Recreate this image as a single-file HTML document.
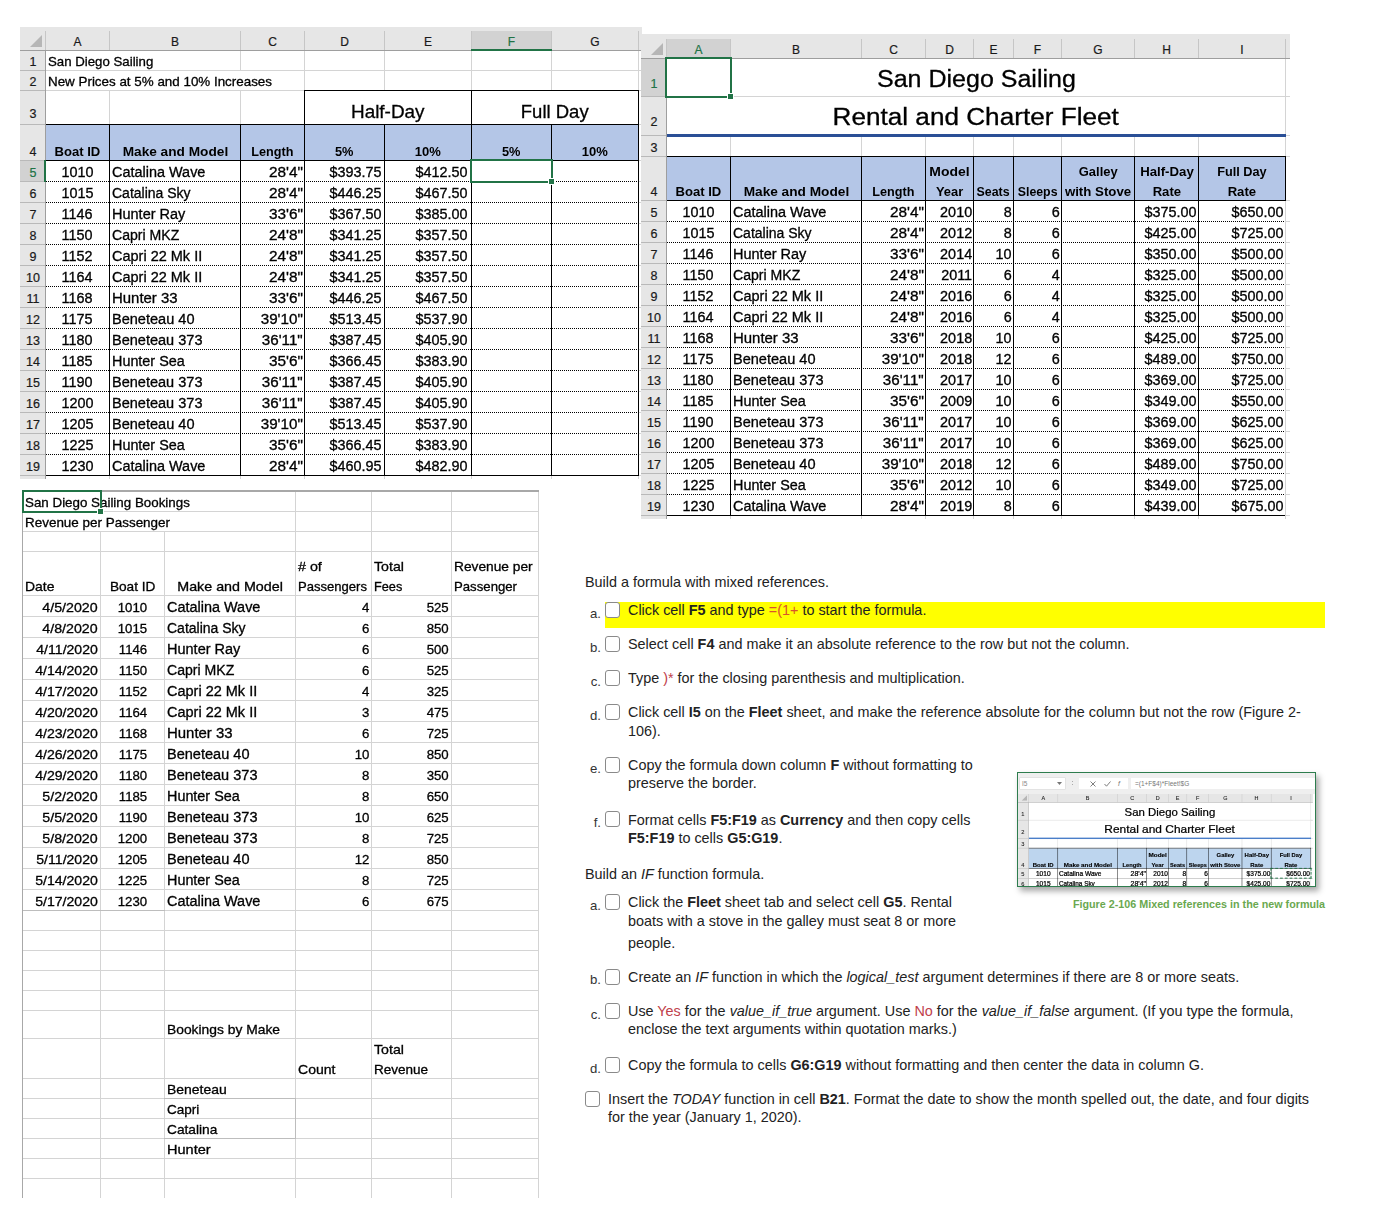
<!DOCTYPE html><html><head><meta charset="utf-8"><style>html,body{margin:0;padding:0;background:#fff;width:1378px;height:1226px;overflow:hidden;position:relative;font-family:"Liberation Sans",sans-serif}div,svg{position:absolute}.t{white-space:nowrap;line-height:0;font-family:"Liberation Sans",sans-serif}</style></head><body>
<div style="left:20px;top:27px;width:622px;height:452px;background:#fff;"></div>
<div style="left:45px;top:70px;width:597px;height:1px;background:#d4d4d4;"></div>
<div style="left:45px;top:90px;width:597px;height:1px;background:#d4d4d4;"></div>
<div style="left:638px;top:124px;width:4px;height:1px;background:#d4d4d4;"></div>
<div style="left:240px;top:50px;width:1px;height:20px;background:#d4d4d4;"></div>
<div style="left:304px;top:50px;width:1px;height:20px;background:#d4d4d4;"></div>
<div style="left:384px;top:50px;width:1px;height:20px;background:#d4d4d4;"></div>
<div style="left:471px;top:50px;width:1px;height:20px;background:#d4d4d4;"></div>
<div style="left:551px;top:50px;width:1px;height:20px;background:#d4d4d4;"></div>
<div style="left:638px;top:50px;width:1px;height:20px;background:#d4d4d4;"></div>
<div style="left:304px;top:70px;width:1px;height:20px;background:#d4d4d4;"></div>
<div style="left:384px;top:70px;width:1px;height:20px;background:#d4d4d4;"></div>
<div style="left:471px;top:70px;width:1px;height:20px;background:#d4d4d4;"></div>
<div style="left:551px;top:70px;width:1px;height:20px;background:#d4d4d4;"></div>
<div style="left:638px;top:70px;width:1px;height:20px;background:#d4d4d4;"></div>
<div style="left:109px;top:90px;width:1px;height:34px;background:#d4d4d4;"></div>
<div style="left:240px;top:90px;width:1px;height:34px;background:#d4d4d4;"></div>
<div style="left:638px;top:160px;width:4px;height:1px;background:#d4d4d4;"></div>
<div style="left:638px;top:181px;width:4px;height:1px;background:#d4d4d4;"></div>
<div style="left:638px;top:202px;width:4px;height:1px;background:#d4d4d4;"></div>
<div style="left:638px;top:223px;width:4px;height:1px;background:#d4d4d4;"></div>
<div style="left:638px;top:244px;width:4px;height:1px;background:#d4d4d4;"></div>
<div style="left:638px;top:265px;width:4px;height:1px;background:#d4d4d4;"></div>
<div style="left:638px;top:286px;width:4px;height:1px;background:#d4d4d4;"></div>
<div style="left:638px;top:307px;width:4px;height:1px;background:#d4d4d4;"></div>
<div style="left:638px;top:328px;width:4px;height:1px;background:#d4d4d4;"></div>
<div style="left:638px;top:349px;width:4px;height:1px;background:#d4d4d4;"></div>
<div style="left:638px;top:370px;width:4px;height:1px;background:#d4d4d4;"></div>
<div style="left:638px;top:391px;width:4px;height:1px;background:#d4d4d4;"></div>
<div style="left:638px;top:412px;width:4px;height:1px;background:#d4d4d4;"></div>
<div style="left:638px;top:433px;width:4px;height:1px;background:#d4d4d4;"></div>
<div style="left:638px;top:454px;width:4px;height:1px;background:#d4d4d4;"></div>
<div style="left:638px;top:475px;width:4px;height:1px;background:#d4d4d4;"></div>
<div style="left:109px;top:475px;width:1px;height:4px;background:#d4d4d4;"></div>
<div style="left:240px;top:475px;width:1px;height:4px;background:#d4d4d4;"></div>
<div style="left:304px;top:475px;width:1px;height:4px;background:#d4d4d4;"></div>
<div style="left:384px;top:475px;width:1px;height:4px;background:#d4d4d4;"></div>
<div style="left:471px;top:475px;width:1px;height:4px;background:#d4d4d4;"></div>
<div style="left:551px;top:475px;width:1px;height:4px;background:#d4d4d4;"></div>
<div style="left:638px;top:475px;width:1px;height:4px;background:#d4d4d4;"></div>
<div style="left:46px;top:125px;width:592px;height:35px;background:#b4c6e7;"></div>
<div style="left:304px;top:90px;width:335px;height:1px;background:#000;"></div>
<div style="left:304px;top:90px;width:1px;height:34px;background:#000;"></div>
<div style="left:471px;top:90px;width:1px;height:34px;background:#000;"></div>
<div style="left:638px;top:90px;width:1px;height:34px;background:#000;"></div>
<div style="left:45px;top:124px;width:594px;height:1px;background:#000;"></div>
<div style="left:45px;top:160px;width:594px;height:1px;background:#000;"></div>
<div style="left:46px;top:181px;width:592px;height:1px;background:repeating-linear-gradient(90deg,#000 0 1px,transparent 1px 2px)"></div>
<div style="left:46px;top:202px;width:592px;height:1px;background:repeating-linear-gradient(90deg,#000 0 1px,transparent 1px 2px)"></div>
<div style="left:46px;top:223px;width:592px;height:1px;background:repeating-linear-gradient(90deg,#000 0 1px,transparent 1px 2px)"></div>
<div style="left:46px;top:244px;width:592px;height:1px;background:repeating-linear-gradient(90deg,#000 0 1px,transparent 1px 2px)"></div>
<div style="left:46px;top:265px;width:592px;height:1px;background:repeating-linear-gradient(90deg,#000 0 1px,transparent 1px 2px)"></div>
<div style="left:46px;top:286px;width:592px;height:1px;background:repeating-linear-gradient(90deg,#000 0 1px,transparent 1px 2px)"></div>
<div style="left:46px;top:307px;width:592px;height:1px;background:repeating-linear-gradient(90deg,#000 0 1px,transparent 1px 2px)"></div>
<div style="left:46px;top:328px;width:592px;height:1px;background:repeating-linear-gradient(90deg,#000 0 1px,transparent 1px 2px)"></div>
<div style="left:46px;top:349px;width:592px;height:1px;background:repeating-linear-gradient(90deg,#000 0 1px,transparent 1px 2px)"></div>
<div style="left:46px;top:370px;width:592px;height:1px;background:repeating-linear-gradient(90deg,#000 0 1px,transparent 1px 2px)"></div>
<div style="left:46px;top:391px;width:592px;height:1px;background:repeating-linear-gradient(90deg,#000 0 1px,transparent 1px 2px)"></div>
<div style="left:46px;top:412px;width:592px;height:1px;background:repeating-linear-gradient(90deg,#000 0 1px,transparent 1px 2px)"></div>
<div style="left:46px;top:433px;width:592px;height:1px;background:repeating-linear-gradient(90deg,#000 0 1px,transparent 1px 2px)"></div>
<div style="left:46px;top:454px;width:592px;height:1px;background:repeating-linear-gradient(90deg,#000 0 1px,transparent 1px 2px)"></div>
<div style="left:45px;top:475px;width:594px;height:1px;background:#000;"></div>
<div style="left:109px;top:124px;width:1px;height:352px;background:#000;"></div>
<div style="left:240px;top:124px;width:1px;height:352px;background:#000;"></div>
<div style="left:304px;top:124px;width:1px;height:352px;background:#000;"></div>
<div style="left:384px;top:124px;width:1px;height:352px;background:#000;"></div>
<div style="left:471px;top:124px;width:1px;height:352px;background:#000;"></div>
<div style="left:551px;top:124px;width:1px;height:352px;background:#000;"></div>
<div style="left:638px;top:124px;width:1px;height:352px;background:#000;"></div>
<div style="left:20px;top:50px;width:25px;height:429px;background:#e6e6e6;"></div>
<div style="left:20px;top:70px;width:25px;height:1px;background:#b9b9b9;"></div>
<div class="t" style="left:20px;top:62px;width:26px;font-size:12.5px;text-align:center;color:#1a1a1a;-webkit-text-stroke:0.2px #1a1a1a">1</div>
<div style="left:20px;top:90px;width:25px;height:1px;background:#b9b9b9;"></div>
<div class="t" style="left:20px;top:82px;width:26px;font-size:12.5px;text-align:center;color:#1a1a1a;-webkit-text-stroke:0.2px #1a1a1a">2</div>
<div style="left:20px;top:124px;width:25px;height:1px;background:#b9b9b9;"></div>
<div class="t" style="left:20px;top:114px;width:26px;font-size:12.5px;text-align:center;color:#1a1a1a;-webkit-text-stroke:0.2px #1a1a1a">3</div>
<div style="left:20px;top:160px;width:25px;height:1px;background:#b9b9b9;"></div>
<div class="t" style="left:20px;top:152px;width:26px;font-size:12.5px;text-align:center;color:#1a1a1a;-webkit-text-stroke:0.2px #1a1a1a">4</div>
<div style="left:20px;top:161px;width:25px;height:20px;background:#d2d2d2;"></div>
<div style="left:20px;top:181px;width:25px;height:1px;background:#b9b9b9;"></div>
<div class="t" style="left:20px;top:173px;width:26px;font-size:12.5px;text-align:center;color:#217346;-webkit-text-stroke:0.2px #217346">5</div>
<div style="left:20px;top:202px;width:25px;height:1px;background:#b9b9b9;"></div>
<div class="t" style="left:20px;top:194px;width:26px;font-size:12.5px;text-align:center;color:#1a1a1a;-webkit-text-stroke:0.2px #1a1a1a">6</div>
<div style="left:20px;top:223px;width:25px;height:1px;background:#b9b9b9;"></div>
<div class="t" style="left:20px;top:215px;width:26px;font-size:12.5px;text-align:center;color:#1a1a1a;-webkit-text-stroke:0.2px #1a1a1a">7</div>
<div style="left:20px;top:244px;width:25px;height:1px;background:#b9b9b9;"></div>
<div class="t" style="left:20px;top:236px;width:26px;font-size:12.5px;text-align:center;color:#1a1a1a;-webkit-text-stroke:0.2px #1a1a1a">8</div>
<div style="left:20px;top:265px;width:25px;height:1px;background:#b9b9b9;"></div>
<div class="t" style="left:20px;top:257px;width:26px;font-size:12.5px;text-align:center;color:#1a1a1a;-webkit-text-stroke:0.2px #1a1a1a">9</div>
<div style="left:20px;top:286px;width:25px;height:1px;background:#b9b9b9;"></div>
<div class="t" style="left:20px;top:278px;width:26px;font-size:12.5px;text-align:center;color:#1a1a1a;-webkit-text-stroke:0.2px #1a1a1a">10</div>
<div style="left:20px;top:307px;width:25px;height:1px;background:#b9b9b9;"></div>
<div class="t" style="left:20px;top:299px;width:26px;font-size:12.5px;text-align:center;color:#1a1a1a;-webkit-text-stroke:0.2px #1a1a1a">11</div>
<div style="left:20px;top:328px;width:25px;height:1px;background:#b9b9b9;"></div>
<div class="t" style="left:20px;top:320px;width:26px;font-size:12.5px;text-align:center;color:#1a1a1a;-webkit-text-stroke:0.2px #1a1a1a">12</div>
<div style="left:20px;top:349px;width:25px;height:1px;background:#b9b9b9;"></div>
<div class="t" style="left:20px;top:341px;width:26px;font-size:12.5px;text-align:center;color:#1a1a1a;-webkit-text-stroke:0.2px #1a1a1a">13</div>
<div style="left:20px;top:370px;width:25px;height:1px;background:#b9b9b9;"></div>
<div class="t" style="left:20px;top:362px;width:26px;font-size:12.5px;text-align:center;color:#1a1a1a;-webkit-text-stroke:0.2px #1a1a1a">14</div>
<div style="left:20px;top:391px;width:25px;height:1px;background:#b9b9b9;"></div>
<div class="t" style="left:20px;top:383px;width:26px;font-size:12.5px;text-align:center;color:#1a1a1a;-webkit-text-stroke:0.2px #1a1a1a">15</div>
<div style="left:20px;top:412px;width:25px;height:1px;background:#b9b9b9;"></div>
<div class="t" style="left:20px;top:404px;width:26px;font-size:12.5px;text-align:center;color:#1a1a1a;-webkit-text-stroke:0.2px #1a1a1a">16</div>
<div style="left:20px;top:433px;width:25px;height:1px;background:#b9b9b9;"></div>
<div class="t" style="left:20px;top:425px;width:26px;font-size:12.5px;text-align:center;color:#1a1a1a;-webkit-text-stroke:0.2px #1a1a1a">17</div>
<div style="left:20px;top:454px;width:25px;height:1px;background:#b9b9b9;"></div>
<div class="t" style="left:20px;top:446px;width:26px;font-size:12.5px;text-align:center;color:#1a1a1a;-webkit-text-stroke:0.2px #1a1a1a">18</div>
<div style="left:20px;top:475px;width:25px;height:1px;background:#b9b9b9;"></div>
<div class="t" style="left:20px;top:467px;width:26px;font-size:12.5px;text-align:center;color:#1a1a1a;-webkit-text-stroke:0.2px #1a1a1a">19</div>
<div style="left:45px;top:50px;width:1px;height:429px;background:#9e9e9e;"></div>
<div style="left:44px;top:160px;width:2px;height:22px;background:#217346;"></div>
<div style="left:20px;top:27px;width:622px;height:23px;background:#e6e6e6;"></div>
<svg style="left:30px;top:35px" width="12" height="12"><polygon points="12,0 12,12 0,12" fill="#b6b6b6"/></svg>
<div style="left:472px;top:31px;width:79px;height:19px;background:#d2d2d2;"></div>
<div style="left:45px;top:31px;width:1px;height:19px;background:#c6c6c6;"></div>
<div style="left:109px;top:31px;width:1px;height:19px;background:#c6c6c6;"></div>
<div style="left:240px;top:31px;width:1px;height:19px;background:#c6c6c6;"></div>
<div style="left:304px;top:31px;width:1px;height:19px;background:#c6c6c6;"></div>
<div style="left:384px;top:31px;width:1px;height:19px;background:#c6c6c6;"></div>
<div style="left:471px;top:31px;width:1px;height:19px;background:#c6c6c6;"></div>
<div style="left:551px;top:31px;width:1px;height:19px;background:#c6c6c6;"></div>
<div style="left:638px;top:31px;width:1px;height:19px;background:#c6c6c6;"></div>
<div style="left:20px;top:50px;width:622px;height:1px;background:#9e9e9e;"></div>
<div class="t" style="left:45px;top:42px;width:65px;font-size:12px;text-align:center;color:#1a1a1a;-webkit-text-stroke:0.2px #1a1a1a">A</div>
<div class="t" style="left:109px;top:42px;width:132px;font-size:12px;text-align:center;color:#1a1a1a;-webkit-text-stroke:0.2px #1a1a1a">B</div>
<div class="t" style="left:240px;top:42px;width:65px;font-size:12px;text-align:center;color:#1a1a1a;-webkit-text-stroke:0.2px #1a1a1a">C</div>
<div class="t" style="left:304px;top:42px;width:81px;font-size:12px;text-align:center;color:#1a1a1a;-webkit-text-stroke:0.2px #1a1a1a">D</div>
<div class="t" style="left:384px;top:42px;width:88px;font-size:12px;text-align:center;color:#1a1a1a;-webkit-text-stroke:0.2px #1a1a1a">E</div>
<div class="t" style="left:471px;top:42px;width:81px;font-size:12px;text-align:center;color:#217346;-webkit-text-stroke:0.2px #217346">F</div>
<div style="left:471px;top:49px;width:81px;height:2px;background:#217346;"></div>
<div class="t" style="left:551px;top:42px;width:88px;font-size:12px;text-align:center;color:#1a1a1a;-webkit-text-stroke:0.2px #1a1a1a">G</div>
<div class="t" style="left:48px;top:62px;width:352px;font-size:13px;text-align:left;color:#000;-webkit-text-stroke:0.3px #000;"><span style="display:inline-block;transform:scaleX(1.0185);transform-origin:0 0">San Diego Sailing</span></div>
<div class="t" style="left:48px;top:82px;width:352px;font-size:13px;text-align:left;color:#000;-webkit-text-stroke:0.3px #000;"><span style="display:inline-block;transform:scaleX(1.0299);transform-origin:0 0">New Prices at 5% and 10% Increases</span></div>
<div class="t" style="left:304px;top:112px;width:168px;font-size:18.4px;text-align:center;color:#000;-webkit-text-stroke:0.3px #000;"><span style="display:inline-block;transform:scaleX(1.0288);transform-origin:50% 0">Half-Day</span></div>
<div class="t" style="left:471px;top:112px;width:168px;font-size:18.4px;text-align:center;color:#000;-webkit-text-stroke:0.3px #000;"><span style="display:inline-block;transform:scaleX(1.0058);transform-origin:50% 0">Full Day</span></div>
<div class="t" style="left:45px;top:152px;width:65px;font-size:12.8px;text-align:center;color:#000;font-weight:bold;"><span style="display:inline-block;transform:scaleX(1.0210);transform-origin:50% 0">Boat ID</span></div>
<div class="t" style="left:109px;top:152px;width:132px;font-size:12.8px;text-align:center;color:#000;font-weight:bold;"><span style="display:inline-block;transform:scaleX(1.0680);transform-origin:50% 0">Make and Model</span></div>
<div class="t" style="left:240px;top:152px;width:65px;font-size:12.8px;text-align:center;color:#000;font-weight:bold;"><span style="display:inline-block;transform:scaleX(0.9878);transform-origin:50% 0">Length</span></div>
<div class="t" style="left:304px;top:152px;width:81px;font-size:12.8px;text-align:center;color:#000;font-weight:bold;"><span style="display:inline-block;transform:scaleX(0.9980);transform-origin:50% 0">5%</span></div>
<div class="t" style="left:384px;top:152px;width:88px;font-size:12.8px;text-align:center;color:#000;font-weight:bold;"><span style="display:inline-block;transform:scaleX(1.0163);transform-origin:50% 0">10%</span></div>
<div class="t" style="left:471px;top:152px;width:81px;font-size:12.8px;text-align:center;color:#000;font-weight:bold;"><span style="display:inline-block;transform:scaleX(0.9980);transform-origin:50% 0">5%</span></div>
<div class="t" style="left:551px;top:152px;width:88px;font-size:12.8px;text-align:center;color:#000;font-weight:bold;"><span style="display:inline-block;transform:scaleX(1.0163);transform-origin:50% 0">10%</span></div>
<div class="t" style="left:45px;top:172px;width:65px;font-size:14px;text-align:center;color:#000;-webkit-text-stroke:0.3px #000;"><span style="display:inline-block;transform:scaleX(1.0285);transform-origin:50% 0">1010</span></div>
<div class="t" style="left:112px;top:172px;width:128px;font-size:14px;text-align:left;color:#000;-webkit-text-stroke:0.3px #000;"><span style="display:inline-block;transform:scaleX(1.0316);transform-origin:0 0">Catalina Wave</span></div>
<div class="t" style="left:240px;top:172px;width:63px;font-size:14px;text-align:right;color:#000;-webkit-text-stroke:0.3px #000;"><span style="display:inline-block;transform:scaleX(1.0978);transform-origin:100% 0">28&#x27;4&quot;</span></div>
<div class="t" style="left:304px;top:172px;width:78px;font-size:14px;text-align:right;color:#000;-webkit-text-stroke:0.3px #000;"><span style="display:inline-block;transform:scaleX(1.0283);transform-origin:100% 0">$393.75</span></div>
<div class="t" style="left:384px;top:172px;width:84px;font-size:14px;text-align:right;color:#000;-webkit-text-stroke:0.3px #000;"><span style="display:inline-block;transform:scaleX(1.0283);transform-origin:100% 0">$412.50</span></div>
<div class="t" style="left:45px;top:193px;width:65px;font-size:14px;text-align:center;color:#000;-webkit-text-stroke:0.3px #000;"><span style="display:inline-block;transform:scaleX(1.0285);transform-origin:50% 0">1015</span></div>
<div class="t" style="left:112px;top:193px;width:128px;font-size:14px;text-align:left;color:#000;-webkit-text-stroke:0.3px #000;"><span style="display:inline-block;transform:scaleX(1.0002);transform-origin:0 0">Catalina Sky</span></div>
<div class="t" style="left:240px;top:193px;width:63px;font-size:14px;text-align:right;color:#000;-webkit-text-stroke:0.3px #000;"><span style="display:inline-block;transform:scaleX(1.0978);transform-origin:100% 0">28&#x27;4&quot;</span></div>
<div class="t" style="left:304px;top:193px;width:78px;font-size:14px;text-align:right;color:#000;-webkit-text-stroke:0.3px #000;"><span style="display:inline-block;transform:scaleX(1.0283);transform-origin:100% 0">$446.25</span></div>
<div class="t" style="left:384px;top:193px;width:84px;font-size:14px;text-align:right;color:#000;-webkit-text-stroke:0.3px #000;"><span style="display:inline-block;transform:scaleX(1.0283);transform-origin:100% 0">$467.50</span></div>
<div class="t" style="left:45px;top:214px;width:65px;font-size:14px;text-align:center;color:#000;-webkit-text-stroke:0.3px #000;"><span style="display:inline-block;transform:scaleX(1.0285);transform-origin:50% 0">1146</span></div>
<div class="t" style="left:112px;top:214px;width:128px;font-size:14px;text-align:left;color:#000;-webkit-text-stroke:0.3px #000;"><span style="display:inline-block;transform:scaleX(1.0359);transform-origin:0 0">Hunter Ray</span></div>
<div class="t" style="left:240px;top:214px;width:63px;font-size:14px;text-align:right;color:#000;-webkit-text-stroke:0.3px #000;"><span style="display:inline-block;transform:scaleX(1.0978);transform-origin:100% 0">33&#x27;6&quot;</span></div>
<div class="t" style="left:304px;top:214px;width:78px;font-size:14px;text-align:right;color:#000;-webkit-text-stroke:0.3px #000;"><span style="display:inline-block;transform:scaleX(1.0283);transform-origin:100% 0">$367.50</span></div>
<div class="t" style="left:384px;top:214px;width:84px;font-size:14px;text-align:right;color:#000;-webkit-text-stroke:0.3px #000;"><span style="display:inline-block;transform:scaleX(1.0283);transform-origin:100% 0">$385.00</span></div>
<div class="t" style="left:45px;top:235px;width:65px;font-size:14px;text-align:center;color:#000;-webkit-text-stroke:0.3px #000;"><span style="display:inline-block;transform:scaleX(1.0285);transform-origin:50% 0">1150</span></div>
<div class="t" style="left:112px;top:235px;width:128px;font-size:14px;text-align:left;color:#000;-webkit-text-stroke:0.3px #000;"><span style="display:inline-block;transform:scaleX(1.0071);transform-origin:0 0">Capri MKZ</span></div>
<div class="t" style="left:240px;top:235px;width:63px;font-size:14px;text-align:right;color:#000;-webkit-text-stroke:0.3px #000;"><span style="display:inline-block;transform:scaleX(1.0978);transform-origin:100% 0">24&#x27;8&quot;</span></div>
<div class="t" style="left:304px;top:235px;width:78px;font-size:14px;text-align:right;color:#000;-webkit-text-stroke:0.3px #000;"><span style="display:inline-block;transform:scaleX(1.0283);transform-origin:100% 0">$341.25</span></div>
<div class="t" style="left:384px;top:235px;width:84px;font-size:14px;text-align:right;color:#000;-webkit-text-stroke:0.3px #000;"><span style="display:inline-block;transform:scaleX(1.0283);transform-origin:100% 0">$357.50</span></div>
<div class="t" style="left:45px;top:256px;width:65px;font-size:14px;text-align:center;color:#000;-webkit-text-stroke:0.3px #000;"><span style="display:inline-block;transform:scaleX(1.0285);transform-origin:50% 0">1152</span></div>
<div class="t" style="left:112px;top:256px;width:128px;font-size:14px;text-align:left;color:#000;-webkit-text-stroke:0.3px #000;"><span style="display:inline-block;transform:scaleX(1.0351);transform-origin:0 0">Capri 22 Mk II</span></div>
<div class="t" style="left:240px;top:256px;width:63px;font-size:14px;text-align:right;color:#000;-webkit-text-stroke:0.3px #000;"><span style="display:inline-block;transform:scaleX(1.0978);transform-origin:100% 0">24&#x27;8&quot;</span></div>
<div class="t" style="left:304px;top:256px;width:78px;font-size:14px;text-align:right;color:#000;-webkit-text-stroke:0.3px #000;"><span style="display:inline-block;transform:scaleX(1.0283);transform-origin:100% 0">$341.25</span></div>
<div class="t" style="left:384px;top:256px;width:84px;font-size:14px;text-align:right;color:#000;-webkit-text-stroke:0.3px #000;"><span style="display:inline-block;transform:scaleX(1.0283);transform-origin:100% 0">$357.50</span></div>
<div class="t" style="left:45px;top:277px;width:65px;font-size:14px;text-align:center;color:#000;-webkit-text-stroke:0.3px #000;"><span style="display:inline-block;transform:scaleX(1.0285);transform-origin:50% 0">1164</span></div>
<div class="t" style="left:112px;top:277px;width:128px;font-size:14px;text-align:left;color:#000;-webkit-text-stroke:0.3px #000;"><span style="display:inline-block;transform:scaleX(1.0351);transform-origin:0 0">Capri 22 Mk II</span></div>
<div class="t" style="left:240px;top:277px;width:63px;font-size:14px;text-align:right;color:#000;-webkit-text-stroke:0.3px #000;"><span style="display:inline-block;transform:scaleX(1.0978);transform-origin:100% 0">24&#x27;8&quot;</span></div>
<div class="t" style="left:304px;top:277px;width:78px;font-size:14px;text-align:right;color:#000;-webkit-text-stroke:0.3px #000;"><span style="display:inline-block;transform:scaleX(1.0283);transform-origin:100% 0">$341.25</span></div>
<div class="t" style="left:384px;top:277px;width:84px;font-size:14px;text-align:right;color:#000;-webkit-text-stroke:0.3px #000;"><span style="display:inline-block;transform:scaleX(1.0283);transform-origin:100% 0">$357.50</span></div>
<div class="t" style="left:45px;top:298px;width:65px;font-size:14px;text-align:center;color:#000;-webkit-text-stroke:0.3px #000;"><span style="display:inline-block;transform:scaleX(1.0285);transform-origin:50% 0">1168</span></div>
<div class="t" style="left:112px;top:298px;width:128px;font-size:14px;text-align:left;color:#000;-webkit-text-stroke:0.3px #000;"><span style="display:inline-block;transform:scaleX(1.0673);transform-origin:0 0">Hunter 33</span></div>
<div class="t" style="left:240px;top:298px;width:63px;font-size:14px;text-align:right;color:#000;-webkit-text-stroke:0.3px #000;"><span style="display:inline-block;transform:scaleX(1.0978);transform-origin:100% 0">33&#x27;6&quot;</span></div>
<div class="t" style="left:304px;top:298px;width:78px;font-size:14px;text-align:right;color:#000;-webkit-text-stroke:0.3px #000;"><span style="display:inline-block;transform:scaleX(1.0283);transform-origin:100% 0">$446.25</span></div>
<div class="t" style="left:384px;top:298px;width:84px;font-size:14px;text-align:right;color:#000;-webkit-text-stroke:0.3px #000;"><span style="display:inline-block;transform:scaleX(1.0283);transform-origin:100% 0">$467.50</span></div>
<div class="t" style="left:45px;top:319px;width:65px;font-size:14px;text-align:center;color:#000;-webkit-text-stroke:0.3px #000;"><span style="display:inline-block;transform:scaleX(1.0285);transform-origin:50% 0">1175</span></div>
<div class="t" style="left:112px;top:319px;width:128px;font-size:14px;text-align:left;color:#000;-webkit-text-stroke:0.3px #000;"><span style="display:inline-block;transform:scaleX(1.0386);transform-origin:0 0">Beneteau 40</span></div>
<div class="t" style="left:240px;top:319px;width:63px;font-size:14px;text-align:right;color:#000;-webkit-text-stroke:0.3px #000;"><span style="display:inline-block;transform:scaleX(1.0839);transform-origin:100% 0">39&#x27;10&quot;</span></div>
<div class="t" style="left:304px;top:319px;width:78px;font-size:14px;text-align:right;color:#000;-webkit-text-stroke:0.3px #000;"><span style="display:inline-block;transform:scaleX(1.0283);transform-origin:100% 0">$513.45</span></div>
<div class="t" style="left:384px;top:319px;width:84px;font-size:14px;text-align:right;color:#000;-webkit-text-stroke:0.3px #000;"><span style="display:inline-block;transform:scaleX(1.0283);transform-origin:100% 0">$537.90</span></div>
<div class="t" style="left:45px;top:340px;width:65px;font-size:14px;text-align:center;color:#000;-webkit-text-stroke:0.3px #000;"><span style="display:inline-block;transform:scaleX(1.0285);transform-origin:50% 0">1180</span></div>
<div class="t" style="left:112px;top:340px;width:128px;font-size:14px;text-align:left;color:#000;-webkit-text-stroke:0.3px #000;"><span style="display:inline-block;transform:scaleX(1.0377);transform-origin:0 0">Beneteau 373</span></div>
<div class="t" style="left:240px;top:340px;width:63px;font-size:14px;text-align:right;color:#000;-webkit-text-stroke:0.3px #000;"><span style="display:inline-block;transform:scaleX(1.0839);transform-origin:100% 0">36&#x27;11&quot;</span></div>
<div class="t" style="left:304px;top:340px;width:78px;font-size:14px;text-align:right;color:#000;-webkit-text-stroke:0.3px #000;"><span style="display:inline-block;transform:scaleX(1.0283);transform-origin:100% 0">$387.45</span></div>
<div class="t" style="left:384px;top:340px;width:84px;font-size:14px;text-align:right;color:#000;-webkit-text-stroke:0.3px #000;"><span style="display:inline-block;transform:scaleX(1.0283);transform-origin:100% 0">$405.90</span></div>
<div class="t" style="left:45px;top:361px;width:65px;font-size:14px;text-align:center;color:#000;-webkit-text-stroke:0.3px #000;"><span style="display:inline-block;transform:scaleX(1.0285);transform-origin:50% 0">1185</span></div>
<div class="t" style="left:112px;top:361px;width:128px;font-size:14px;text-align:left;color:#000;-webkit-text-stroke:0.3px #000;"><span style="display:inline-block;transform:scaleX(1.0269);transform-origin:0 0">Hunter Sea</span></div>
<div class="t" style="left:240px;top:361px;width:63px;font-size:14px;text-align:right;color:#000;-webkit-text-stroke:0.3px #000;"><span style="display:inline-block;transform:scaleX(1.0978);transform-origin:100% 0">35&#x27;6&quot;</span></div>
<div class="t" style="left:304px;top:361px;width:78px;font-size:14px;text-align:right;color:#000;-webkit-text-stroke:0.3px #000;"><span style="display:inline-block;transform:scaleX(1.0283);transform-origin:100% 0">$366.45</span></div>
<div class="t" style="left:384px;top:361px;width:84px;font-size:14px;text-align:right;color:#000;-webkit-text-stroke:0.3px #000;"><span style="display:inline-block;transform:scaleX(1.0283);transform-origin:100% 0">$383.90</span></div>
<div class="t" style="left:45px;top:382px;width:65px;font-size:14px;text-align:center;color:#000;-webkit-text-stroke:0.3px #000;"><span style="display:inline-block;transform:scaleX(1.0285);transform-origin:50% 0">1190</span></div>
<div class="t" style="left:112px;top:382px;width:128px;font-size:14px;text-align:left;color:#000;-webkit-text-stroke:0.3px #000;"><span style="display:inline-block;transform:scaleX(1.0377);transform-origin:0 0">Beneteau 373</span></div>
<div class="t" style="left:240px;top:382px;width:63px;font-size:14px;text-align:right;color:#000;-webkit-text-stroke:0.3px #000;"><span style="display:inline-block;transform:scaleX(1.0839);transform-origin:100% 0">36&#x27;11&quot;</span></div>
<div class="t" style="left:304px;top:382px;width:78px;font-size:14px;text-align:right;color:#000;-webkit-text-stroke:0.3px #000;"><span style="display:inline-block;transform:scaleX(1.0283);transform-origin:100% 0">$387.45</span></div>
<div class="t" style="left:384px;top:382px;width:84px;font-size:14px;text-align:right;color:#000;-webkit-text-stroke:0.3px #000;"><span style="display:inline-block;transform:scaleX(1.0283);transform-origin:100% 0">$405.90</span></div>
<div class="t" style="left:45px;top:403px;width:65px;font-size:14px;text-align:center;color:#000;-webkit-text-stroke:0.3px #000;"><span style="display:inline-block;transform:scaleX(1.0285);transform-origin:50% 0">1200</span></div>
<div class="t" style="left:112px;top:403px;width:128px;font-size:14px;text-align:left;color:#000;-webkit-text-stroke:0.3px #000;"><span style="display:inline-block;transform:scaleX(1.0377);transform-origin:0 0">Beneteau 373</span></div>
<div class="t" style="left:240px;top:403px;width:63px;font-size:14px;text-align:right;color:#000;-webkit-text-stroke:0.3px #000;"><span style="display:inline-block;transform:scaleX(1.0839);transform-origin:100% 0">36&#x27;11&quot;</span></div>
<div class="t" style="left:304px;top:403px;width:78px;font-size:14px;text-align:right;color:#000;-webkit-text-stroke:0.3px #000;"><span style="display:inline-block;transform:scaleX(1.0283);transform-origin:100% 0">$387.45</span></div>
<div class="t" style="left:384px;top:403px;width:84px;font-size:14px;text-align:right;color:#000;-webkit-text-stroke:0.3px #000;"><span style="display:inline-block;transform:scaleX(1.0283);transform-origin:100% 0">$405.90</span></div>
<div class="t" style="left:45px;top:424px;width:65px;font-size:14px;text-align:center;color:#000;-webkit-text-stroke:0.3px #000;"><span style="display:inline-block;transform:scaleX(1.0285);transform-origin:50% 0">1205</span></div>
<div class="t" style="left:112px;top:424px;width:128px;font-size:14px;text-align:left;color:#000;-webkit-text-stroke:0.3px #000;"><span style="display:inline-block;transform:scaleX(1.0386);transform-origin:0 0">Beneteau 40</span></div>
<div class="t" style="left:240px;top:424px;width:63px;font-size:14px;text-align:right;color:#000;-webkit-text-stroke:0.3px #000;"><span style="display:inline-block;transform:scaleX(1.0839);transform-origin:100% 0">39&#x27;10&quot;</span></div>
<div class="t" style="left:304px;top:424px;width:78px;font-size:14px;text-align:right;color:#000;-webkit-text-stroke:0.3px #000;"><span style="display:inline-block;transform:scaleX(1.0283);transform-origin:100% 0">$513.45</span></div>
<div class="t" style="left:384px;top:424px;width:84px;font-size:14px;text-align:right;color:#000;-webkit-text-stroke:0.3px #000;"><span style="display:inline-block;transform:scaleX(1.0283);transform-origin:100% 0">$537.90</span></div>
<div class="t" style="left:45px;top:445px;width:65px;font-size:14px;text-align:center;color:#000;-webkit-text-stroke:0.3px #000;"><span style="display:inline-block;transform:scaleX(1.0285);transform-origin:50% 0">1225</span></div>
<div class="t" style="left:112px;top:445px;width:128px;font-size:14px;text-align:left;color:#000;-webkit-text-stroke:0.3px #000;"><span style="display:inline-block;transform:scaleX(1.0269);transform-origin:0 0">Hunter Sea</span></div>
<div class="t" style="left:240px;top:445px;width:63px;font-size:14px;text-align:right;color:#000;-webkit-text-stroke:0.3px #000;"><span style="display:inline-block;transform:scaleX(1.0978);transform-origin:100% 0">35&#x27;6&quot;</span></div>
<div class="t" style="left:304px;top:445px;width:78px;font-size:14px;text-align:right;color:#000;-webkit-text-stroke:0.3px #000;"><span style="display:inline-block;transform:scaleX(1.0283);transform-origin:100% 0">$366.45</span></div>
<div class="t" style="left:384px;top:445px;width:84px;font-size:14px;text-align:right;color:#000;-webkit-text-stroke:0.3px #000;"><span style="display:inline-block;transform:scaleX(1.0283);transform-origin:100% 0">$383.90</span></div>
<div class="t" style="left:45px;top:466px;width:65px;font-size:14px;text-align:center;color:#000;-webkit-text-stroke:0.3px #000;"><span style="display:inline-block;transform:scaleX(1.0285);transform-origin:50% 0">1230</span></div>
<div class="t" style="left:112px;top:466px;width:128px;font-size:14px;text-align:left;color:#000;-webkit-text-stroke:0.3px #000;"><span style="display:inline-block;transform:scaleX(1.0316);transform-origin:0 0">Catalina Wave</span></div>
<div class="t" style="left:240px;top:466px;width:63px;font-size:14px;text-align:right;color:#000;-webkit-text-stroke:0.3px #000;"><span style="display:inline-block;transform:scaleX(1.0978);transform-origin:100% 0">28&#x27;4&quot;</span></div>
<div class="t" style="left:304px;top:466px;width:78px;font-size:14px;text-align:right;color:#000;-webkit-text-stroke:0.3px #000;"><span style="display:inline-block;transform:scaleX(1.0283);transform-origin:100% 0">$460.95</span></div>
<div class="t" style="left:384px;top:466px;width:84px;font-size:14px;text-align:right;color:#000;-webkit-text-stroke:0.3px #000;"><span style="display:inline-block;transform:scaleX(1.0283);transform-origin:100% 0">$482.90</span></div>
<div style="left:470px;top:159px;width:83px;height:24px;box-sizing:border-box;border:2px solid #217346;"></div>
<div style="left:549px;top:179px;width:5px;height:5px;background:#217346;outline:1px solid #fff"></div>
<div style="left:641px;top:34px;width:649px;height:485px;background:#fff;"></div>
<div style="left:666px;top:96px;width:624px;height:1px;background:#d4d4d4;"></div>
<div style="left:1285px;top:58px;width:1px;height:98px;background:#d4d4d4;"></div>
<div style="left:666px;top:156px;width:624px;height:1px;background:#d4d4d4;"></div>
<div style="left:730px;top:137px;width:1px;height:19px;background:#d4d4d4;"></div>
<div style="left:861px;top:137px;width:1px;height:19px;background:#d4d4d4;"></div>
<div style="left:925px;top:137px;width:1px;height:19px;background:#d4d4d4;"></div>
<div style="left:973px;top:137px;width:1px;height:19px;background:#d4d4d4;"></div>
<div style="left:1013px;top:137px;width:1px;height:19px;background:#d4d4d4;"></div>
<div style="left:1061px;top:137px;width:1px;height:19px;background:#d4d4d4;"></div>
<div style="left:1134px;top:137px;width:1px;height:19px;background:#d4d4d4;"></div>
<div style="left:1198px;top:137px;width:1px;height:19px;background:#d4d4d4;"></div>
<div style="left:730px;top:516px;width:1px;height:3px;background:#d4d4d4;"></div>
<div style="left:861px;top:516px;width:1px;height:3px;background:#d4d4d4;"></div>
<div style="left:925px;top:516px;width:1px;height:3px;background:#d4d4d4;"></div>
<div style="left:973px;top:516px;width:1px;height:3px;background:#d4d4d4;"></div>
<div style="left:1013px;top:516px;width:1px;height:3px;background:#d4d4d4;"></div>
<div style="left:1061px;top:516px;width:1px;height:3px;background:#d4d4d4;"></div>
<div style="left:1134px;top:516px;width:1px;height:3px;background:#d4d4d4;"></div>
<div style="left:1198px;top:516px;width:1px;height:3px;background:#d4d4d4;"></div>
<div style="left:1285px;top:516px;width:1px;height:3px;background:#d4d4d4;"></div>
<div style="left:667px;top:157px;width:618px;height:43px;background:#b4c6e7;"></div>
<div style="left:667px;top:134px;width:619px;height:3px;background:#2a4f96;"></div>
<div style="left:666px;top:156px;width:620px;height:1px;background:#000;"></div>
<div style="left:666px;top:200px;width:620px;height:1px;background:#000;"></div>
<div style="left:667px;top:221px;width:618px;height:1px;background:repeating-linear-gradient(90deg,#000 0 1px,transparent 1px 2px)"></div>
<div style="left:1285px;top:221px;width:5px;height:1px;background:#d4d4d4;"></div>
<div style="left:667px;top:242px;width:618px;height:1px;background:repeating-linear-gradient(90deg,#000 0 1px,transparent 1px 2px)"></div>
<div style="left:1285px;top:242px;width:5px;height:1px;background:#d4d4d4;"></div>
<div style="left:667px;top:263px;width:618px;height:1px;background:repeating-linear-gradient(90deg,#000 0 1px,transparent 1px 2px)"></div>
<div style="left:1285px;top:263px;width:5px;height:1px;background:#d4d4d4;"></div>
<div style="left:667px;top:284px;width:618px;height:1px;background:repeating-linear-gradient(90deg,#000 0 1px,transparent 1px 2px)"></div>
<div style="left:1285px;top:284px;width:5px;height:1px;background:#d4d4d4;"></div>
<div style="left:667px;top:305px;width:618px;height:1px;background:repeating-linear-gradient(90deg,#000 0 1px,transparent 1px 2px)"></div>
<div style="left:1285px;top:305px;width:5px;height:1px;background:#d4d4d4;"></div>
<div style="left:667px;top:326px;width:618px;height:1px;background:repeating-linear-gradient(90deg,#000 0 1px,transparent 1px 2px)"></div>
<div style="left:1285px;top:326px;width:5px;height:1px;background:#d4d4d4;"></div>
<div style="left:667px;top:347px;width:618px;height:1px;background:repeating-linear-gradient(90deg,#000 0 1px,transparent 1px 2px)"></div>
<div style="left:1285px;top:347px;width:5px;height:1px;background:#d4d4d4;"></div>
<div style="left:667px;top:368px;width:618px;height:1px;background:repeating-linear-gradient(90deg,#000 0 1px,transparent 1px 2px)"></div>
<div style="left:1285px;top:368px;width:5px;height:1px;background:#d4d4d4;"></div>
<div style="left:667px;top:389px;width:618px;height:1px;background:repeating-linear-gradient(90deg,#000 0 1px,transparent 1px 2px)"></div>
<div style="left:1285px;top:389px;width:5px;height:1px;background:#d4d4d4;"></div>
<div style="left:667px;top:410px;width:618px;height:1px;background:repeating-linear-gradient(90deg,#000 0 1px,transparent 1px 2px)"></div>
<div style="left:1285px;top:410px;width:5px;height:1px;background:#d4d4d4;"></div>
<div style="left:667px;top:431px;width:618px;height:1px;background:repeating-linear-gradient(90deg,#000 0 1px,transparent 1px 2px)"></div>
<div style="left:1285px;top:431px;width:5px;height:1px;background:#d4d4d4;"></div>
<div style="left:667px;top:452px;width:618px;height:1px;background:repeating-linear-gradient(90deg,#000 0 1px,transparent 1px 2px)"></div>
<div style="left:1285px;top:452px;width:5px;height:1px;background:#d4d4d4;"></div>
<div style="left:667px;top:473px;width:618px;height:1px;background:repeating-linear-gradient(90deg,#000 0 1px,transparent 1px 2px)"></div>
<div style="left:1285px;top:473px;width:5px;height:1px;background:#d4d4d4;"></div>
<div style="left:667px;top:494px;width:618px;height:1px;background:repeating-linear-gradient(90deg,#000 0 1px,transparent 1px 2px)"></div>
<div style="left:1285px;top:494px;width:5px;height:1px;background:#d4d4d4;"></div>
<div style="left:666px;top:515px;width:619px;height:1px;background:#000;"></div>
<div style="left:730px;top:156px;width:1px;height:360px;background:#000;"></div>
<div style="left:861px;top:156px;width:1px;height:360px;background:#000;"></div>
<div style="left:925px;top:156px;width:1px;height:360px;background:#000;"></div>
<div style="left:973px;top:156px;width:1px;height:360px;background:#000;"></div>
<div style="left:1013px;top:156px;width:1px;height:360px;background:#000;"></div>
<div style="left:1061px;top:156px;width:1px;height:360px;background:#000;"></div>
<div style="left:1134px;top:156px;width:1px;height:360px;background:#000;"></div>
<div style="left:1198px;top:156px;width:1px;height:360px;background:#000;"></div>
<div style="left:1285px;top:156px;width:1px;height:45px;background:#000;"></div>
<div style="left:1285px;top:201px;width:1px;height:318px;background:#d4d4d4;"></div>
<div style="left:1286px;top:96px;width:4px;height:1px;background:#d4d4d4;"></div>
<div style="left:1286px;top:135px;width:4px;height:1px;background:#d4d4d4;"></div>
<div style="left:1286px;top:156px;width:4px;height:1px;background:#d4d4d4;"></div>
<div style="left:1286px;top:200px;width:4px;height:1px;background:#d4d4d4;"></div>
<div style="left:1286px;top:221px;width:4px;height:1px;background:#d4d4d4;"></div>
<div style="left:1286px;top:242px;width:4px;height:1px;background:#d4d4d4;"></div>
<div style="left:1286px;top:263px;width:4px;height:1px;background:#d4d4d4;"></div>
<div style="left:1286px;top:284px;width:4px;height:1px;background:#d4d4d4;"></div>
<div style="left:1286px;top:305px;width:4px;height:1px;background:#d4d4d4;"></div>
<div style="left:1286px;top:326px;width:4px;height:1px;background:#d4d4d4;"></div>
<div style="left:1286px;top:347px;width:4px;height:1px;background:#d4d4d4;"></div>
<div style="left:1286px;top:368px;width:4px;height:1px;background:#d4d4d4;"></div>
<div style="left:1286px;top:389px;width:4px;height:1px;background:#d4d4d4;"></div>
<div style="left:1286px;top:410px;width:4px;height:1px;background:#d4d4d4;"></div>
<div style="left:1286px;top:431px;width:4px;height:1px;background:#d4d4d4;"></div>
<div style="left:1286px;top:452px;width:4px;height:1px;background:#d4d4d4;"></div>
<div style="left:1286px;top:473px;width:4px;height:1px;background:#d4d4d4;"></div>
<div style="left:1286px;top:494px;width:4px;height:1px;background:#d4d4d4;"></div>
<div style="left:1286px;top:515px;width:4px;height:1px;background:#d4d4d4;"></div>
<div style="left:641px;top:58px;width:25px;height:461px;background:#e6e6e6;"></div>
<div style="left:641px;top:59px;width:25px;height:37px;background:#d2d2d2;"></div>
<div style="left:641px;top:96px;width:25px;height:1px;background:#b9b9b9;"></div>
<div class="t" style="left:641px;top:84px;width:26px;font-size:12.5px;text-align:center;color:#217346;-webkit-text-stroke:0.2px #217346">1</div>
<div style="left:641px;top:135px;width:25px;height:1px;background:#b9b9b9;"></div>
<div class="t" style="left:641px;top:122px;width:26px;font-size:12.5px;text-align:center;color:#1a1a1a;-webkit-text-stroke:0.2px #1a1a1a">2</div>
<div style="left:641px;top:156px;width:25px;height:1px;background:#b9b9b9;"></div>
<div class="t" style="left:641px;top:148px;width:26px;font-size:12.5px;text-align:center;color:#1a1a1a;-webkit-text-stroke:0.2px #1a1a1a">3</div>
<div style="left:641px;top:200px;width:25px;height:1px;background:#b9b9b9;"></div>
<div class="t" style="left:641px;top:192px;width:26px;font-size:12.5px;text-align:center;color:#1a1a1a;-webkit-text-stroke:0.2px #1a1a1a">4</div>
<div style="left:641px;top:221px;width:25px;height:1px;background:#b9b9b9;"></div>
<div class="t" style="left:641px;top:213px;width:26px;font-size:12.5px;text-align:center;color:#1a1a1a;-webkit-text-stroke:0.2px #1a1a1a">5</div>
<div style="left:641px;top:242px;width:25px;height:1px;background:#b9b9b9;"></div>
<div class="t" style="left:641px;top:234px;width:26px;font-size:12.5px;text-align:center;color:#1a1a1a;-webkit-text-stroke:0.2px #1a1a1a">6</div>
<div style="left:641px;top:263px;width:25px;height:1px;background:#b9b9b9;"></div>
<div class="t" style="left:641px;top:255px;width:26px;font-size:12.5px;text-align:center;color:#1a1a1a;-webkit-text-stroke:0.2px #1a1a1a">7</div>
<div style="left:641px;top:284px;width:25px;height:1px;background:#b9b9b9;"></div>
<div class="t" style="left:641px;top:276px;width:26px;font-size:12.5px;text-align:center;color:#1a1a1a;-webkit-text-stroke:0.2px #1a1a1a">8</div>
<div style="left:641px;top:305px;width:25px;height:1px;background:#b9b9b9;"></div>
<div class="t" style="left:641px;top:297px;width:26px;font-size:12.5px;text-align:center;color:#1a1a1a;-webkit-text-stroke:0.2px #1a1a1a">9</div>
<div style="left:641px;top:326px;width:25px;height:1px;background:#b9b9b9;"></div>
<div class="t" style="left:641px;top:318px;width:26px;font-size:12.5px;text-align:center;color:#1a1a1a;-webkit-text-stroke:0.2px #1a1a1a">10</div>
<div style="left:641px;top:347px;width:25px;height:1px;background:#b9b9b9;"></div>
<div class="t" style="left:641px;top:339px;width:26px;font-size:12.5px;text-align:center;color:#1a1a1a;-webkit-text-stroke:0.2px #1a1a1a">11</div>
<div style="left:641px;top:368px;width:25px;height:1px;background:#b9b9b9;"></div>
<div class="t" style="left:641px;top:360px;width:26px;font-size:12.5px;text-align:center;color:#1a1a1a;-webkit-text-stroke:0.2px #1a1a1a">12</div>
<div style="left:641px;top:389px;width:25px;height:1px;background:#b9b9b9;"></div>
<div class="t" style="left:641px;top:381px;width:26px;font-size:12.5px;text-align:center;color:#1a1a1a;-webkit-text-stroke:0.2px #1a1a1a">13</div>
<div style="left:641px;top:410px;width:25px;height:1px;background:#b9b9b9;"></div>
<div class="t" style="left:641px;top:402px;width:26px;font-size:12.5px;text-align:center;color:#1a1a1a;-webkit-text-stroke:0.2px #1a1a1a">14</div>
<div style="left:641px;top:431px;width:25px;height:1px;background:#b9b9b9;"></div>
<div class="t" style="left:641px;top:423px;width:26px;font-size:12.5px;text-align:center;color:#1a1a1a;-webkit-text-stroke:0.2px #1a1a1a">15</div>
<div style="left:641px;top:452px;width:25px;height:1px;background:#b9b9b9;"></div>
<div class="t" style="left:641px;top:444px;width:26px;font-size:12.5px;text-align:center;color:#1a1a1a;-webkit-text-stroke:0.2px #1a1a1a">16</div>
<div style="left:641px;top:473px;width:25px;height:1px;background:#b9b9b9;"></div>
<div class="t" style="left:641px;top:465px;width:26px;font-size:12.5px;text-align:center;color:#1a1a1a;-webkit-text-stroke:0.2px #1a1a1a">17</div>
<div style="left:641px;top:494px;width:25px;height:1px;background:#b9b9b9;"></div>
<div class="t" style="left:641px;top:486px;width:26px;font-size:12.5px;text-align:center;color:#1a1a1a;-webkit-text-stroke:0.2px #1a1a1a">18</div>
<div style="left:641px;top:515px;width:25px;height:1px;background:#b9b9b9;"></div>
<div class="t" style="left:641px;top:507px;width:26px;font-size:12.5px;text-align:center;color:#1a1a1a;-webkit-text-stroke:0.2px #1a1a1a">19</div>
<div style="left:666px;top:58px;width:1px;height:461px;background:#9e9e9e;"></div>
<div style="left:665px;top:58px;width:2px;height:39px;background:#217346;"></div>
<div style="left:641px;top:34px;width:649px;height:24px;background:#e6e6e6;"></div>
<svg style="left:651px;top:43px" width="12" height="12"><polygon points="12,0 12,12 0,12" fill="#b6b6b6"/></svg>
<div style="left:667px;top:39px;width:63px;height:19px;background:#d2d2d2;"></div>
<div style="left:666px;top:39px;width:1px;height:19px;background:#c6c6c6;"></div>
<div style="left:730px;top:39px;width:1px;height:19px;background:#c6c6c6;"></div>
<div style="left:861px;top:39px;width:1px;height:19px;background:#c6c6c6;"></div>
<div style="left:925px;top:39px;width:1px;height:19px;background:#c6c6c6;"></div>
<div style="left:973px;top:39px;width:1px;height:19px;background:#c6c6c6;"></div>
<div style="left:1013px;top:39px;width:1px;height:19px;background:#c6c6c6;"></div>
<div style="left:1061px;top:39px;width:1px;height:19px;background:#c6c6c6;"></div>
<div style="left:1134px;top:39px;width:1px;height:19px;background:#c6c6c6;"></div>
<div style="left:1198px;top:39px;width:1px;height:19px;background:#c6c6c6;"></div>
<div style="left:1285px;top:39px;width:1px;height:19px;background:#c6c6c6;"></div>
<div style="left:641px;top:58px;width:649px;height:1px;background:#9e9e9e;"></div>
<div class="t" style="left:666px;top:50px;width:65px;font-size:12px;text-align:center;color:#217346;-webkit-text-stroke:0.2px #217346">A</div>
<div style="left:666px;top:57px;width:65px;height:2px;background:#217346;"></div>
<div class="t" style="left:730px;top:50px;width:132px;font-size:12px;text-align:center;color:#1a1a1a;-webkit-text-stroke:0.2px #1a1a1a">B</div>
<div class="t" style="left:861px;top:50px;width:65px;font-size:12px;text-align:center;color:#1a1a1a;-webkit-text-stroke:0.2px #1a1a1a">C</div>
<div class="t" style="left:925px;top:50px;width:49px;font-size:12px;text-align:center;color:#1a1a1a;-webkit-text-stroke:0.2px #1a1a1a">D</div>
<div class="t" style="left:973px;top:50px;width:41px;font-size:12px;text-align:center;color:#1a1a1a;-webkit-text-stroke:0.2px #1a1a1a">E</div>
<div class="t" style="left:1013px;top:50px;width:49px;font-size:12px;text-align:center;color:#1a1a1a;-webkit-text-stroke:0.2px #1a1a1a">F</div>
<div class="t" style="left:1061px;top:50px;width:74px;font-size:12px;text-align:center;color:#1a1a1a;-webkit-text-stroke:0.2px #1a1a1a">G</div>
<div class="t" style="left:1134px;top:50px;width:65px;font-size:12px;text-align:center;color:#1a1a1a;-webkit-text-stroke:0.2px #1a1a1a">H</div>
<div class="t" style="left:1198px;top:50px;width:88px;font-size:12px;text-align:center;color:#1a1a1a;-webkit-text-stroke:0.2px #1a1a1a">I</div>
<div class="t" style="left:666px;top:79px;width:620px;font-size:23.5px;text-align:center;color:#000;-webkit-text-stroke:0.3px #000;"><span style="display:inline-block;transform:scaleX(1.0642);transform-origin:50% 0">San Diego Sailing</span></div>
<div class="t" style="left:666px;top:117px;width:620px;font-size:23.5px;text-align:center;color:#000;-webkit-text-stroke:0.3px #000;"><span style="display:inline-block;transform:scaleX(1.1123);transform-origin:50% 0">Rental and Charter Fleet</span></div>
<div class="t" style="left:666px;top:192px;width:65px;font-size:12.8px;text-align:center;color:#000;font-weight:bold;"><span style="display:inline-block;transform:scaleX(1.0210);transform-origin:50% 0">Boat ID</span></div>
<div class="t" style="left:730px;top:192px;width:132px;font-size:12.8px;text-align:center;color:#000;font-weight:bold;"><span style="display:inline-block;transform:scaleX(1.0680);transform-origin:50% 0">Make and Model</span></div>
<div class="t" style="left:861px;top:192px;width:65px;font-size:12.8px;text-align:center;color:#000;font-weight:bold;"><span style="display:inline-block;transform:scaleX(0.9878);transform-origin:50% 0">Length</span></div>
<div class="t" style="left:925px;top:172px;width:49px;font-size:12.8px;text-align:center;color:#000;font-weight:bold;"><span style="display:inline-block;transform:scaleX(1.0898);transform-origin:50% 0">Model</span></div>
<div class="t" style="left:925px;top:192px;width:49px;font-size:12.8px;text-align:center;color:#000;font-weight:bold;"><span style="display:inline-block;transform:scaleX(1.0077);transform-origin:50% 0">Year</span></div>
<div class="t" style="left:973px;top:192px;width:41px;font-size:12.8px;text-align:center;color:#000;font-weight:bold;"><span style="display:inline-block;transform:scaleX(0.9690);transform-origin:50% 0">Seats</span></div>
<div class="t" style="left:1013px;top:192px;width:49px;font-size:12.8px;text-align:center;color:#000;font-weight:bold;"><span style="display:inline-block;transform:scaleX(0.9632);transform-origin:50% 0">Sleeps</span></div>
<div class="t" style="left:1061px;top:172px;width:74px;font-size:12.8px;text-align:center;color:#000;font-weight:bold;"><span style="display:inline-block;transform:scaleX(1.0106);transform-origin:50% 0">Galley</span></div>
<div class="t" style="left:1061px;top:192px;width:74px;font-size:12.8px;text-align:center;color:#000;font-weight:bold;"><span style="display:inline-block;transform:scaleX(1.0349);transform-origin:50% 0">with Stove</span></div>
<div class="t" style="left:1134px;top:172px;width:65px;font-size:12.8px;text-align:center;color:#000;font-weight:bold;"><span style="display:inline-block;transform:scaleX(1.0330);transform-origin:50% 0">Half-Day</span></div>
<div class="t" style="left:1134px;top:192px;width:65px;font-size:12.8px;text-align:center;color:#000;font-weight:bold;"><span style="display:inline-block;transform:scaleX(1.0268);transform-origin:50% 0">Rate</span></div>
<div class="t" style="left:1198px;top:172px;width:88px;font-size:12.8px;text-align:center;color:#000;font-weight:bold;"><span style="display:inline-block;transform:scaleX(0.9934);transform-origin:50% 0">Full Day</span></div>
<div class="t" style="left:1198px;top:192px;width:88px;font-size:12.8px;text-align:center;color:#000;font-weight:bold;"><span style="display:inline-block;transform:scaleX(1.0268);transform-origin:50% 0">Rate</span></div>
<div class="t" style="left:666px;top:212px;width:65px;font-size:14px;text-align:center;color:#000;-webkit-text-stroke:0.3px #000;"><span style="display:inline-block;transform:scaleX(1.0285);transform-origin:50% 0">1010</span></div>
<div class="t" style="left:733px;top:212px;width:128px;font-size:14px;text-align:left;color:#000;-webkit-text-stroke:0.3px #000;"><span style="display:inline-block;transform:scaleX(1.0316);transform-origin:0 0">Catalina Wave</span></div>
<div class="t" style="left:861px;top:212px;width:63px;font-size:14px;text-align:right;color:#000;-webkit-text-stroke:0.3px #000;"><span style="display:inline-block;transform:scaleX(1.0978);transform-origin:100% 0">28&#x27;4&quot;</span></div>
<div class="t" style="left:925px;top:212px;width:47px;font-size:14px;text-align:right;color:#000;-webkit-text-stroke:0.3px #000;"><span style="display:inline-block;transform:scaleX(1.0285);transform-origin:100% 0">2010</span></div>
<div class="t" style="left:973px;top:212px;width:39px;font-size:14px;text-align:right;color:#000;-webkit-text-stroke:0.3px #000;"><span style="display:inline-block;transform:scaleX(1.0285);transform-origin:100% 0">8</span></div>
<div class="t" style="left:1013px;top:212px;width:47px;font-size:14px;text-align:right;color:#000;-webkit-text-stroke:0.3px #000;"><span style="display:inline-block;transform:scaleX(1.0285);transform-origin:100% 0">6</span></div>
<div class="t" style="left:1134px;top:212px;width:63px;font-size:14px;text-align:right;color:#000;-webkit-text-stroke:0.3px #000;"><span style="display:inline-block;transform:scaleX(1.0283);transform-origin:100% 0">$375.00</span></div>
<div class="t" style="left:1198px;top:212px;width:86px;font-size:14px;text-align:right;color:#000;-webkit-text-stroke:0.3px #000;"><span style="display:inline-block;transform:scaleX(1.0283);transform-origin:100% 0">$650.00</span></div>
<div class="t" style="left:666px;top:233px;width:65px;font-size:14px;text-align:center;color:#000;-webkit-text-stroke:0.3px #000;"><span style="display:inline-block;transform:scaleX(1.0285);transform-origin:50% 0">1015</span></div>
<div class="t" style="left:733px;top:233px;width:128px;font-size:14px;text-align:left;color:#000;-webkit-text-stroke:0.3px #000;"><span style="display:inline-block;transform:scaleX(1.0002);transform-origin:0 0">Catalina Sky</span></div>
<div class="t" style="left:861px;top:233px;width:63px;font-size:14px;text-align:right;color:#000;-webkit-text-stroke:0.3px #000;"><span style="display:inline-block;transform:scaleX(1.0978);transform-origin:100% 0">28&#x27;4&quot;</span></div>
<div class="t" style="left:925px;top:233px;width:47px;font-size:14px;text-align:right;color:#000;-webkit-text-stroke:0.3px #000;"><span style="display:inline-block;transform:scaleX(1.0285);transform-origin:100% 0">2012</span></div>
<div class="t" style="left:973px;top:233px;width:39px;font-size:14px;text-align:right;color:#000;-webkit-text-stroke:0.3px #000;"><span style="display:inline-block;transform:scaleX(1.0285);transform-origin:100% 0">8</span></div>
<div class="t" style="left:1013px;top:233px;width:47px;font-size:14px;text-align:right;color:#000;-webkit-text-stroke:0.3px #000;"><span style="display:inline-block;transform:scaleX(1.0285);transform-origin:100% 0">6</span></div>
<div class="t" style="left:1134px;top:233px;width:63px;font-size:14px;text-align:right;color:#000;-webkit-text-stroke:0.3px #000;"><span style="display:inline-block;transform:scaleX(1.0283);transform-origin:100% 0">$425.00</span></div>
<div class="t" style="left:1198px;top:233px;width:86px;font-size:14px;text-align:right;color:#000;-webkit-text-stroke:0.3px #000;"><span style="display:inline-block;transform:scaleX(1.0283);transform-origin:100% 0">$725.00</span></div>
<div class="t" style="left:666px;top:254px;width:65px;font-size:14px;text-align:center;color:#000;-webkit-text-stroke:0.3px #000;"><span style="display:inline-block;transform:scaleX(1.0285);transform-origin:50% 0">1146</span></div>
<div class="t" style="left:733px;top:254px;width:128px;font-size:14px;text-align:left;color:#000;-webkit-text-stroke:0.3px #000;"><span style="display:inline-block;transform:scaleX(1.0359);transform-origin:0 0">Hunter Ray</span></div>
<div class="t" style="left:861px;top:254px;width:63px;font-size:14px;text-align:right;color:#000;-webkit-text-stroke:0.3px #000;"><span style="display:inline-block;transform:scaleX(1.0978);transform-origin:100% 0">33&#x27;6&quot;</span></div>
<div class="t" style="left:925px;top:254px;width:47px;font-size:14px;text-align:right;color:#000;-webkit-text-stroke:0.3px #000;"><span style="display:inline-block;transform:scaleX(1.0285);transform-origin:100% 0">2014</span></div>
<div class="t" style="left:973px;top:254px;width:39px;font-size:14px;text-align:right;color:#000;-webkit-text-stroke:0.3px #000;"><span style="display:inline-block;transform:scaleX(1.0285);transform-origin:100% 0">10</span></div>
<div class="t" style="left:1013px;top:254px;width:47px;font-size:14px;text-align:right;color:#000;-webkit-text-stroke:0.3px #000;"><span style="display:inline-block;transform:scaleX(1.0285);transform-origin:100% 0">6</span></div>
<div class="t" style="left:1134px;top:254px;width:63px;font-size:14px;text-align:right;color:#000;-webkit-text-stroke:0.3px #000;"><span style="display:inline-block;transform:scaleX(1.0283);transform-origin:100% 0">$350.00</span></div>
<div class="t" style="left:1198px;top:254px;width:86px;font-size:14px;text-align:right;color:#000;-webkit-text-stroke:0.3px #000;"><span style="display:inline-block;transform:scaleX(1.0283);transform-origin:100% 0">$500.00</span></div>
<div class="t" style="left:666px;top:275px;width:65px;font-size:14px;text-align:center;color:#000;-webkit-text-stroke:0.3px #000;"><span style="display:inline-block;transform:scaleX(1.0285);transform-origin:50% 0">1150</span></div>
<div class="t" style="left:733px;top:275px;width:128px;font-size:14px;text-align:left;color:#000;-webkit-text-stroke:0.3px #000;"><span style="display:inline-block;transform:scaleX(1.0071);transform-origin:0 0">Capri MKZ</span></div>
<div class="t" style="left:861px;top:275px;width:63px;font-size:14px;text-align:right;color:#000;-webkit-text-stroke:0.3px #000;"><span style="display:inline-block;transform:scaleX(1.0978);transform-origin:100% 0">24&#x27;8&quot;</span></div>
<div class="t" style="left:925px;top:275px;width:47px;font-size:14px;text-align:right;color:#000;-webkit-text-stroke:0.3px #000;"><span style="display:inline-block;transform:scaleX(1.0285);transform-origin:100% 0">2011</span></div>
<div class="t" style="left:973px;top:275px;width:39px;font-size:14px;text-align:right;color:#000;-webkit-text-stroke:0.3px #000;"><span style="display:inline-block;transform:scaleX(1.0285);transform-origin:100% 0">6</span></div>
<div class="t" style="left:1013px;top:275px;width:47px;font-size:14px;text-align:right;color:#000;-webkit-text-stroke:0.3px #000;"><span style="display:inline-block;transform:scaleX(1.0285);transform-origin:100% 0">4</span></div>
<div class="t" style="left:1134px;top:275px;width:63px;font-size:14px;text-align:right;color:#000;-webkit-text-stroke:0.3px #000;"><span style="display:inline-block;transform:scaleX(1.0283);transform-origin:100% 0">$325.00</span></div>
<div class="t" style="left:1198px;top:275px;width:86px;font-size:14px;text-align:right;color:#000;-webkit-text-stroke:0.3px #000;"><span style="display:inline-block;transform:scaleX(1.0283);transform-origin:100% 0">$500.00</span></div>
<div class="t" style="left:666px;top:296px;width:65px;font-size:14px;text-align:center;color:#000;-webkit-text-stroke:0.3px #000;"><span style="display:inline-block;transform:scaleX(1.0285);transform-origin:50% 0">1152</span></div>
<div class="t" style="left:733px;top:296px;width:128px;font-size:14px;text-align:left;color:#000;-webkit-text-stroke:0.3px #000;"><span style="display:inline-block;transform:scaleX(1.0351);transform-origin:0 0">Capri 22 Mk II</span></div>
<div class="t" style="left:861px;top:296px;width:63px;font-size:14px;text-align:right;color:#000;-webkit-text-stroke:0.3px #000;"><span style="display:inline-block;transform:scaleX(1.0978);transform-origin:100% 0">24&#x27;8&quot;</span></div>
<div class="t" style="left:925px;top:296px;width:47px;font-size:14px;text-align:right;color:#000;-webkit-text-stroke:0.3px #000;"><span style="display:inline-block;transform:scaleX(1.0285);transform-origin:100% 0">2016</span></div>
<div class="t" style="left:973px;top:296px;width:39px;font-size:14px;text-align:right;color:#000;-webkit-text-stroke:0.3px #000;"><span style="display:inline-block;transform:scaleX(1.0285);transform-origin:100% 0">6</span></div>
<div class="t" style="left:1013px;top:296px;width:47px;font-size:14px;text-align:right;color:#000;-webkit-text-stroke:0.3px #000;"><span style="display:inline-block;transform:scaleX(1.0285);transform-origin:100% 0">4</span></div>
<div class="t" style="left:1134px;top:296px;width:63px;font-size:14px;text-align:right;color:#000;-webkit-text-stroke:0.3px #000;"><span style="display:inline-block;transform:scaleX(1.0283);transform-origin:100% 0">$325.00</span></div>
<div class="t" style="left:1198px;top:296px;width:86px;font-size:14px;text-align:right;color:#000;-webkit-text-stroke:0.3px #000;"><span style="display:inline-block;transform:scaleX(1.0283);transform-origin:100% 0">$500.00</span></div>
<div class="t" style="left:666px;top:317px;width:65px;font-size:14px;text-align:center;color:#000;-webkit-text-stroke:0.3px #000;"><span style="display:inline-block;transform:scaleX(1.0285);transform-origin:50% 0">1164</span></div>
<div class="t" style="left:733px;top:317px;width:128px;font-size:14px;text-align:left;color:#000;-webkit-text-stroke:0.3px #000;"><span style="display:inline-block;transform:scaleX(1.0351);transform-origin:0 0">Capri 22 Mk II</span></div>
<div class="t" style="left:861px;top:317px;width:63px;font-size:14px;text-align:right;color:#000;-webkit-text-stroke:0.3px #000;"><span style="display:inline-block;transform:scaleX(1.0978);transform-origin:100% 0">24&#x27;8&quot;</span></div>
<div class="t" style="left:925px;top:317px;width:47px;font-size:14px;text-align:right;color:#000;-webkit-text-stroke:0.3px #000;"><span style="display:inline-block;transform:scaleX(1.0285);transform-origin:100% 0">2016</span></div>
<div class="t" style="left:973px;top:317px;width:39px;font-size:14px;text-align:right;color:#000;-webkit-text-stroke:0.3px #000;"><span style="display:inline-block;transform:scaleX(1.0285);transform-origin:100% 0">6</span></div>
<div class="t" style="left:1013px;top:317px;width:47px;font-size:14px;text-align:right;color:#000;-webkit-text-stroke:0.3px #000;"><span style="display:inline-block;transform:scaleX(1.0285);transform-origin:100% 0">4</span></div>
<div class="t" style="left:1134px;top:317px;width:63px;font-size:14px;text-align:right;color:#000;-webkit-text-stroke:0.3px #000;"><span style="display:inline-block;transform:scaleX(1.0283);transform-origin:100% 0">$325.00</span></div>
<div class="t" style="left:1198px;top:317px;width:86px;font-size:14px;text-align:right;color:#000;-webkit-text-stroke:0.3px #000;"><span style="display:inline-block;transform:scaleX(1.0283);transform-origin:100% 0">$500.00</span></div>
<div class="t" style="left:666px;top:338px;width:65px;font-size:14px;text-align:center;color:#000;-webkit-text-stroke:0.3px #000;"><span style="display:inline-block;transform:scaleX(1.0285);transform-origin:50% 0">1168</span></div>
<div class="t" style="left:733px;top:338px;width:128px;font-size:14px;text-align:left;color:#000;-webkit-text-stroke:0.3px #000;"><span style="display:inline-block;transform:scaleX(1.0673);transform-origin:0 0">Hunter 33</span></div>
<div class="t" style="left:861px;top:338px;width:63px;font-size:14px;text-align:right;color:#000;-webkit-text-stroke:0.3px #000;"><span style="display:inline-block;transform:scaleX(1.0978);transform-origin:100% 0">33&#x27;6&quot;</span></div>
<div class="t" style="left:925px;top:338px;width:47px;font-size:14px;text-align:right;color:#000;-webkit-text-stroke:0.3px #000;"><span style="display:inline-block;transform:scaleX(1.0285);transform-origin:100% 0">2018</span></div>
<div class="t" style="left:973px;top:338px;width:39px;font-size:14px;text-align:right;color:#000;-webkit-text-stroke:0.3px #000;"><span style="display:inline-block;transform:scaleX(1.0285);transform-origin:100% 0">10</span></div>
<div class="t" style="left:1013px;top:338px;width:47px;font-size:14px;text-align:right;color:#000;-webkit-text-stroke:0.3px #000;"><span style="display:inline-block;transform:scaleX(1.0285);transform-origin:100% 0">6</span></div>
<div class="t" style="left:1134px;top:338px;width:63px;font-size:14px;text-align:right;color:#000;-webkit-text-stroke:0.3px #000;"><span style="display:inline-block;transform:scaleX(1.0283);transform-origin:100% 0">$425.00</span></div>
<div class="t" style="left:1198px;top:338px;width:86px;font-size:14px;text-align:right;color:#000;-webkit-text-stroke:0.3px #000;"><span style="display:inline-block;transform:scaleX(1.0283);transform-origin:100% 0">$725.00</span></div>
<div class="t" style="left:666px;top:359px;width:65px;font-size:14px;text-align:center;color:#000;-webkit-text-stroke:0.3px #000;"><span style="display:inline-block;transform:scaleX(1.0285);transform-origin:50% 0">1175</span></div>
<div class="t" style="left:733px;top:359px;width:128px;font-size:14px;text-align:left;color:#000;-webkit-text-stroke:0.3px #000;"><span style="display:inline-block;transform:scaleX(1.0386);transform-origin:0 0">Beneteau 40</span></div>
<div class="t" style="left:861px;top:359px;width:63px;font-size:14px;text-align:right;color:#000;-webkit-text-stroke:0.3px #000;"><span style="display:inline-block;transform:scaleX(1.0839);transform-origin:100% 0">39&#x27;10&quot;</span></div>
<div class="t" style="left:925px;top:359px;width:47px;font-size:14px;text-align:right;color:#000;-webkit-text-stroke:0.3px #000;"><span style="display:inline-block;transform:scaleX(1.0285);transform-origin:100% 0">2018</span></div>
<div class="t" style="left:973px;top:359px;width:39px;font-size:14px;text-align:right;color:#000;-webkit-text-stroke:0.3px #000;"><span style="display:inline-block;transform:scaleX(1.0285);transform-origin:100% 0">12</span></div>
<div class="t" style="left:1013px;top:359px;width:47px;font-size:14px;text-align:right;color:#000;-webkit-text-stroke:0.3px #000;"><span style="display:inline-block;transform:scaleX(1.0285);transform-origin:100% 0">6</span></div>
<div class="t" style="left:1134px;top:359px;width:63px;font-size:14px;text-align:right;color:#000;-webkit-text-stroke:0.3px #000;"><span style="display:inline-block;transform:scaleX(1.0283);transform-origin:100% 0">$489.00</span></div>
<div class="t" style="left:1198px;top:359px;width:86px;font-size:14px;text-align:right;color:#000;-webkit-text-stroke:0.3px #000;"><span style="display:inline-block;transform:scaleX(1.0283);transform-origin:100% 0">$750.00</span></div>
<div class="t" style="left:666px;top:380px;width:65px;font-size:14px;text-align:center;color:#000;-webkit-text-stroke:0.3px #000;"><span style="display:inline-block;transform:scaleX(1.0285);transform-origin:50% 0">1180</span></div>
<div class="t" style="left:733px;top:380px;width:128px;font-size:14px;text-align:left;color:#000;-webkit-text-stroke:0.3px #000;"><span style="display:inline-block;transform:scaleX(1.0377);transform-origin:0 0">Beneteau 373</span></div>
<div class="t" style="left:861px;top:380px;width:63px;font-size:14px;text-align:right;color:#000;-webkit-text-stroke:0.3px #000;"><span style="display:inline-block;transform:scaleX(1.0839);transform-origin:100% 0">36&#x27;11&quot;</span></div>
<div class="t" style="left:925px;top:380px;width:47px;font-size:14px;text-align:right;color:#000;-webkit-text-stroke:0.3px #000;"><span style="display:inline-block;transform:scaleX(1.0285);transform-origin:100% 0">2017</span></div>
<div class="t" style="left:973px;top:380px;width:39px;font-size:14px;text-align:right;color:#000;-webkit-text-stroke:0.3px #000;"><span style="display:inline-block;transform:scaleX(1.0285);transform-origin:100% 0">10</span></div>
<div class="t" style="left:1013px;top:380px;width:47px;font-size:14px;text-align:right;color:#000;-webkit-text-stroke:0.3px #000;"><span style="display:inline-block;transform:scaleX(1.0285);transform-origin:100% 0">6</span></div>
<div class="t" style="left:1134px;top:380px;width:63px;font-size:14px;text-align:right;color:#000;-webkit-text-stroke:0.3px #000;"><span style="display:inline-block;transform:scaleX(1.0283);transform-origin:100% 0">$369.00</span></div>
<div class="t" style="left:1198px;top:380px;width:86px;font-size:14px;text-align:right;color:#000;-webkit-text-stroke:0.3px #000;"><span style="display:inline-block;transform:scaleX(1.0283);transform-origin:100% 0">$725.00</span></div>
<div class="t" style="left:666px;top:401px;width:65px;font-size:14px;text-align:center;color:#000;-webkit-text-stroke:0.3px #000;"><span style="display:inline-block;transform:scaleX(1.0285);transform-origin:50% 0">1185</span></div>
<div class="t" style="left:733px;top:401px;width:128px;font-size:14px;text-align:left;color:#000;-webkit-text-stroke:0.3px #000;"><span style="display:inline-block;transform:scaleX(1.0269);transform-origin:0 0">Hunter Sea</span></div>
<div class="t" style="left:861px;top:401px;width:63px;font-size:14px;text-align:right;color:#000;-webkit-text-stroke:0.3px #000;"><span style="display:inline-block;transform:scaleX(1.0978);transform-origin:100% 0">35&#x27;6&quot;</span></div>
<div class="t" style="left:925px;top:401px;width:47px;font-size:14px;text-align:right;color:#000;-webkit-text-stroke:0.3px #000;"><span style="display:inline-block;transform:scaleX(1.0285);transform-origin:100% 0">2009</span></div>
<div class="t" style="left:973px;top:401px;width:39px;font-size:14px;text-align:right;color:#000;-webkit-text-stroke:0.3px #000;"><span style="display:inline-block;transform:scaleX(1.0285);transform-origin:100% 0">10</span></div>
<div class="t" style="left:1013px;top:401px;width:47px;font-size:14px;text-align:right;color:#000;-webkit-text-stroke:0.3px #000;"><span style="display:inline-block;transform:scaleX(1.0285);transform-origin:100% 0">6</span></div>
<div class="t" style="left:1134px;top:401px;width:63px;font-size:14px;text-align:right;color:#000;-webkit-text-stroke:0.3px #000;"><span style="display:inline-block;transform:scaleX(1.0283);transform-origin:100% 0">$349.00</span></div>
<div class="t" style="left:1198px;top:401px;width:86px;font-size:14px;text-align:right;color:#000;-webkit-text-stroke:0.3px #000;"><span style="display:inline-block;transform:scaleX(1.0283);transform-origin:100% 0">$550.00</span></div>
<div class="t" style="left:666px;top:422px;width:65px;font-size:14px;text-align:center;color:#000;-webkit-text-stroke:0.3px #000;"><span style="display:inline-block;transform:scaleX(1.0285);transform-origin:50% 0">1190</span></div>
<div class="t" style="left:733px;top:422px;width:128px;font-size:14px;text-align:left;color:#000;-webkit-text-stroke:0.3px #000;"><span style="display:inline-block;transform:scaleX(1.0377);transform-origin:0 0">Beneteau 373</span></div>
<div class="t" style="left:861px;top:422px;width:63px;font-size:14px;text-align:right;color:#000;-webkit-text-stroke:0.3px #000;"><span style="display:inline-block;transform:scaleX(1.0839);transform-origin:100% 0">36&#x27;11&quot;</span></div>
<div class="t" style="left:925px;top:422px;width:47px;font-size:14px;text-align:right;color:#000;-webkit-text-stroke:0.3px #000;"><span style="display:inline-block;transform:scaleX(1.0285);transform-origin:100% 0">2017</span></div>
<div class="t" style="left:973px;top:422px;width:39px;font-size:14px;text-align:right;color:#000;-webkit-text-stroke:0.3px #000;"><span style="display:inline-block;transform:scaleX(1.0285);transform-origin:100% 0">10</span></div>
<div class="t" style="left:1013px;top:422px;width:47px;font-size:14px;text-align:right;color:#000;-webkit-text-stroke:0.3px #000;"><span style="display:inline-block;transform:scaleX(1.0285);transform-origin:100% 0">6</span></div>
<div class="t" style="left:1134px;top:422px;width:63px;font-size:14px;text-align:right;color:#000;-webkit-text-stroke:0.3px #000;"><span style="display:inline-block;transform:scaleX(1.0283);transform-origin:100% 0">$369.00</span></div>
<div class="t" style="left:1198px;top:422px;width:86px;font-size:14px;text-align:right;color:#000;-webkit-text-stroke:0.3px #000;"><span style="display:inline-block;transform:scaleX(1.0283);transform-origin:100% 0">$625.00</span></div>
<div class="t" style="left:666px;top:443px;width:65px;font-size:14px;text-align:center;color:#000;-webkit-text-stroke:0.3px #000;"><span style="display:inline-block;transform:scaleX(1.0285);transform-origin:50% 0">1200</span></div>
<div class="t" style="left:733px;top:443px;width:128px;font-size:14px;text-align:left;color:#000;-webkit-text-stroke:0.3px #000;"><span style="display:inline-block;transform:scaleX(1.0377);transform-origin:0 0">Beneteau 373</span></div>
<div class="t" style="left:861px;top:443px;width:63px;font-size:14px;text-align:right;color:#000;-webkit-text-stroke:0.3px #000;"><span style="display:inline-block;transform:scaleX(1.0839);transform-origin:100% 0">36&#x27;11&quot;</span></div>
<div class="t" style="left:925px;top:443px;width:47px;font-size:14px;text-align:right;color:#000;-webkit-text-stroke:0.3px #000;"><span style="display:inline-block;transform:scaleX(1.0285);transform-origin:100% 0">2017</span></div>
<div class="t" style="left:973px;top:443px;width:39px;font-size:14px;text-align:right;color:#000;-webkit-text-stroke:0.3px #000;"><span style="display:inline-block;transform:scaleX(1.0285);transform-origin:100% 0">10</span></div>
<div class="t" style="left:1013px;top:443px;width:47px;font-size:14px;text-align:right;color:#000;-webkit-text-stroke:0.3px #000;"><span style="display:inline-block;transform:scaleX(1.0285);transform-origin:100% 0">6</span></div>
<div class="t" style="left:1134px;top:443px;width:63px;font-size:14px;text-align:right;color:#000;-webkit-text-stroke:0.3px #000;"><span style="display:inline-block;transform:scaleX(1.0283);transform-origin:100% 0">$369.00</span></div>
<div class="t" style="left:1198px;top:443px;width:86px;font-size:14px;text-align:right;color:#000;-webkit-text-stroke:0.3px #000;"><span style="display:inline-block;transform:scaleX(1.0283);transform-origin:100% 0">$625.00</span></div>
<div class="t" style="left:666px;top:464px;width:65px;font-size:14px;text-align:center;color:#000;-webkit-text-stroke:0.3px #000;"><span style="display:inline-block;transform:scaleX(1.0285);transform-origin:50% 0">1205</span></div>
<div class="t" style="left:733px;top:464px;width:128px;font-size:14px;text-align:left;color:#000;-webkit-text-stroke:0.3px #000;"><span style="display:inline-block;transform:scaleX(1.0386);transform-origin:0 0">Beneteau 40</span></div>
<div class="t" style="left:861px;top:464px;width:63px;font-size:14px;text-align:right;color:#000;-webkit-text-stroke:0.3px #000;"><span style="display:inline-block;transform:scaleX(1.0839);transform-origin:100% 0">39&#x27;10&quot;</span></div>
<div class="t" style="left:925px;top:464px;width:47px;font-size:14px;text-align:right;color:#000;-webkit-text-stroke:0.3px #000;"><span style="display:inline-block;transform:scaleX(1.0285);transform-origin:100% 0">2018</span></div>
<div class="t" style="left:973px;top:464px;width:39px;font-size:14px;text-align:right;color:#000;-webkit-text-stroke:0.3px #000;"><span style="display:inline-block;transform:scaleX(1.0285);transform-origin:100% 0">12</span></div>
<div class="t" style="left:1013px;top:464px;width:47px;font-size:14px;text-align:right;color:#000;-webkit-text-stroke:0.3px #000;"><span style="display:inline-block;transform:scaleX(1.0285);transform-origin:100% 0">6</span></div>
<div class="t" style="left:1134px;top:464px;width:63px;font-size:14px;text-align:right;color:#000;-webkit-text-stroke:0.3px #000;"><span style="display:inline-block;transform:scaleX(1.0283);transform-origin:100% 0">$489.00</span></div>
<div class="t" style="left:1198px;top:464px;width:86px;font-size:14px;text-align:right;color:#000;-webkit-text-stroke:0.3px #000;"><span style="display:inline-block;transform:scaleX(1.0283);transform-origin:100% 0">$750.00</span></div>
<div class="t" style="left:666px;top:485px;width:65px;font-size:14px;text-align:center;color:#000;-webkit-text-stroke:0.3px #000;"><span style="display:inline-block;transform:scaleX(1.0285);transform-origin:50% 0">1225</span></div>
<div class="t" style="left:733px;top:485px;width:128px;font-size:14px;text-align:left;color:#000;-webkit-text-stroke:0.3px #000;"><span style="display:inline-block;transform:scaleX(1.0269);transform-origin:0 0">Hunter Sea</span></div>
<div class="t" style="left:861px;top:485px;width:63px;font-size:14px;text-align:right;color:#000;-webkit-text-stroke:0.3px #000;"><span style="display:inline-block;transform:scaleX(1.0978);transform-origin:100% 0">35&#x27;6&quot;</span></div>
<div class="t" style="left:925px;top:485px;width:47px;font-size:14px;text-align:right;color:#000;-webkit-text-stroke:0.3px #000;"><span style="display:inline-block;transform:scaleX(1.0285);transform-origin:100% 0">2012</span></div>
<div class="t" style="left:973px;top:485px;width:39px;font-size:14px;text-align:right;color:#000;-webkit-text-stroke:0.3px #000;"><span style="display:inline-block;transform:scaleX(1.0285);transform-origin:100% 0">10</span></div>
<div class="t" style="left:1013px;top:485px;width:47px;font-size:14px;text-align:right;color:#000;-webkit-text-stroke:0.3px #000;"><span style="display:inline-block;transform:scaleX(1.0285);transform-origin:100% 0">6</span></div>
<div class="t" style="left:1134px;top:485px;width:63px;font-size:14px;text-align:right;color:#000;-webkit-text-stroke:0.3px #000;"><span style="display:inline-block;transform:scaleX(1.0283);transform-origin:100% 0">$349.00</span></div>
<div class="t" style="left:1198px;top:485px;width:86px;font-size:14px;text-align:right;color:#000;-webkit-text-stroke:0.3px #000;"><span style="display:inline-block;transform:scaleX(1.0283);transform-origin:100% 0">$725.00</span></div>
<div class="t" style="left:666px;top:506px;width:65px;font-size:14px;text-align:center;color:#000;-webkit-text-stroke:0.3px #000;"><span style="display:inline-block;transform:scaleX(1.0285);transform-origin:50% 0">1230</span></div>
<div class="t" style="left:733px;top:506px;width:128px;font-size:14px;text-align:left;color:#000;-webkit-text-stroke:0.3px #000;"><span style="display:inline-block;transform:scaleX(1.0316);transform-origin:0 0">Catalina Wave</span></div>
<div class="t" style="left:861px;top:506px;width:63px;font-size:14px;text-align:right;color:#000;-webkit-text-stroke:0.3px #000;"><span style="display:inline-block;transform:scaleX(1.0978);transform-origin:100% 0">28&#x27;4&quot;</span></div>
<div class="t" style="left:925px;top:506px;width:47px;font-size:14px;text-align:right;color:#000;-webkit-text-stroke:0.3px #000;"><span style="display:inline-block;transform:scaleX(1.0285);transform-origin:100% 0">2019</span></div>
<div class="t" style="left:973px;top:506px;width:39px;font-size:14px;text-align:right;color:#000;-webkit-text-stroke:0.3px #000;"><span style="display:inline-block;transform:scaleX(1.0285);transform-origin:100% 0">8</span></div>
<div class="t" style="left:1013px;top:506px;width:47px;font-size:14px;text-align:right;color:#000;-webkit-text-stroke:0.3px #000;"><span style="display:inline-block;transform:scaleX(1.0285);transform-origin:100% 0">6</span></div>
<div class="t" style="left:1134px;top:506px;width:63px;font-size:14px;text-align:right;color:#000;-webkit-text-stroke:0.3px #000;"><span style="display:inline-block;transform:scaleX(1.0283);transform-origin:100% 0">$439.00</span></div>
<div class="t" style="left:1198px;top:506px;width:86px;font-size:14px;text-align:right;color:#000;-webkit-text-stroke:0.3px #000;"><span style="display:inline-block;transform:scaleX(1.0283);transform-origin:100% 0">$675.00</span></div>
<div style="left:665px;top:57px;width:67px;height:41px;box-sizing:border-box;border:2px solid #217346;"></div>
<div style="left:728px;top:94px;width:5px;height:5px;background:#217346;outline:1px solid #fff"></div>
<div style="left:22px;top:511px;width:517px;height:1px;background:#d4d4d4;"></div>
<div style="left:22px;top:531px;width:517px;height:1px;background:#d4d4d4;"></div>
<div style="left:22px;top:551px;width:517px;height:1px;background:#d4d4d4;"></div>
<div style="left:22px;top:595px;width:517px;height:1px;background:#d4d4d4;"></div>
<div style="left:22px;top:616px;width:517px;height:1px;background:#d4d4d4;"></div>
<div style="left:22px;top:637px;width:517px;height:1px;background:#d4d4d4;"></div>
<div style="left:22px;top:658px;width:517px;height:1px;background:#d4d4d4;"></div>
<div style="left:22px;top:679px;width:517px;height:1px;background:#d4d4d4;"></div>
<div style="left:22px;top:700px;width:517px;height:1px;background:#d4d4d4;"></div>
<div style="left:22px;top:721px;width:517px;height:1px;background:#d4d4d4;"></div>
<div style="left:22px;top:742px;width:517px;height:1px;background:#d4d4d4;"></div>
<div style="left:22px;top:763px;width:517px;height:1px;background:#d4d4d4;"></div>
<div style="left:22px;top:784px;width:517px;height:1px;background:#d4d4d4;"></div>
<div style="left:22px;top:805px;width:517px;height:1px;background:#d4d4d4;"></div>
<div style="left:22px;top:826px;width:517px;height:1px;background:#d4d4d4;"></div>
<div style="left:22px;top:847px;width:517px;height:1px;background:#d4d4d4;"></div>
<div style="left:22px;top:868px;width:517px;height:1px;background:#d4d4d4;"></div>
<div style="left:22px;top:889px;width:517px;height:1px;background:#d4d4d4;"></div>
<div style="left:22px;top:910px;width:517px;height:1px;background:#d4d4d4;"></div>
<div style="left:22px;top:930px;width:517px;height:1px;background:#d4d4d4;"></div>
<div style="left:22px;top:950px;width:517px;height:1px;background:#d4d4d4;"></div>
<div style="left:22px;top:970px;width:517px;height:1px;background:#d4d4d4;"></div>
<div style="left:22px;top:990px;width:517px;height:1px;background:#d4d4d4;"></div>
<div style="left:22px;top:1010px;width:517px;height:1px;background:#d4d4d4;"></div>
<div style="left:22px;top:1038px;width:517px;height:1px;background:#d4d4d4;"></div>
<div style="left:22px;top:1078px;width:517px;height:1px;background:#d4d4d4;"></div>
<div style="left:22px;top:1098px;width:517px;height:1px;background:#d4d4d4;"></div>
<div style="left:22px;top:1118px;width:517px;height:1px;background:#d4d4d4;"></div>
<div style="left:22px;top:1138px;width:517px;height:1px;background:#d4d4d4;"></div>
<div style="left:22px;top:1158px;width:517px;height:1px;background:#d4d4d4;"></div>
<div style="left:22px;top:1178px;width:517px;height:1px;background:#d4d4d4;"></div>
<div style="left:100px;top:490px;width:1px;height:708px;background:#d4d4d4;"></div>
<div style="left:164px;top:490px;width:1px;height:708px;background:#d4d4d4;"></div>
<div style="left:295px;top:490px;width:1px;height:708px;background:#d4d4d4;"></div>
<div style="left:371px;top:490px;width:1px;height:708px;background:#d4d4d4;"></div>
<div style="left:451px;top:490px;width:1px;height:708px;background:#d4d4d4;"></div>
<div style="left:538px;top:490px;width:1px;height:708px;background:#d4d4d4;"></div>
<div style="left:23px;top:491px;width:272px;height:40px;background:#fff;"></div>
<div style="left:22px;top:511px;width:517px;height:1px;background:#d4d4d4;"></div>
<div style="left:22px;top:531px;width:517px;height:1px;background:#d4d4d4;"></div>
<div style="left:295px;top:490px;width:1px;height:41px;background:#d4d4d4;"></div>
<div style="left:22px;top:910px;width:143px;height:1px;background:#bdbdbd;"></div>
<div style="left:164px;top:1098px;width:132px;height:41px;box-sizing:border-box;border:1px solid #bdbdbd;border-left:none"></div>
<div style="left:22px;top:490px;width:517px;height:2px;background:#a8a8a8;"></div>
<div style="left:22px;top:490px;width:1px;height:708px;background:#a8a8a8;"></div>
<div class="t" style="left:25px;top:503px;width:275px;font-size:13px;text-align:left;color:#000;-webkit-text-stroke:0.3px #000;"><span style="display:inline-block;transform:scaleX(1.0276);transform-origin:0 0">San Diego Sailing Bookings</span></div>
<div class="t" style="left:25px;top:523px;width:275px;font-size:13px;text-align:left;color:#000;-webkit-text-stroke:0.3px #000;"><span style="display:inline-block;transform:scaleX(1.0345);transform-origin:0 0">Revenue per Passenger</span></div>
<div class="t" style="left:25px;top:587px;width:75px;font-size:13px;text-align:left;color:#000;-webkit-text-stroke:0.3px #000;"><span style="display:inline-block;transform:scaleX(1.0735);transform-origin:0 0">Date</span></div>
<div class="t" style="left:100px;top:587px;width:65px;font-size:13px;text-align:center;color:#000;-webkit-text-stroke:0.3px #000;"><span style="display:inline-block;transform:scaleX(1.0511);transform-origin:50% 0">Boat ID</span></div>
<div class="t" style="left:164px;top:587px;width:132px;font-size:13px;text-align:center;color:#000;-webkit-text-stroke:0.3px #000;"><span style="display:inline-block;transform:scaleX(1.0989);transform-origin:50% 0">Make and Model</span></div>
<div class="t" style="left:298px;top:567px;width:73px;font-size:13px;text-align:left;color:#000;-webkit-text-stroke:0.3px #000;"><span style="display:inline-block;transform:scaleX(1.0984);transform-origin:0 0"># of</span></div>
<div class="t" style="left:298px;top:587px;width:73px;font-size:13px;text-align:left;color:#000;-webkit-text-stroke:0.3px #000;"><span style="display:inline-block;transform:scaleX(1.0049);transform-origin:0 0">Passengers</span></div>
<div class="t" style="left:374px;top:567px;width:77px;font-size:13px;text-align:left;color:#000;-webkit-text-stroke:0.3px #000;"><span style="display:inline-block;transform:scaleX(1.0896);transform-origin:0 0">Total</span></div>
<div class="t" style="left:374px;top:587px;width:77px;font-size:13px;text-align:left;color:#000;-webkit-text-stroke:0.3px #000;"><span style="display:inline-block;transform:scaleX(0.9771);transform-origin:0 0">Fees</span></div>
<div class="t" style="left:454px;top:567px;width:84px;font-size:13px;text-align:left;color:#000;-webkit-text-stroke:0.3px #000;"><span style="display:inline-block;transform:scaleX(1.0556);transform-origin:0 0">Revenue per</span></div>
<div class="t" style="left:454px;top:587px;width:84px;font-size:13px;text-align:left;color:#000;-webkit-text-stroke:0.3px #000;"><span style="display:inline-block;transform:scaleX(1.0137);transform-origin:0 0">Passenger</span></div>
<div class="t" style="left:22px;top:608px;width:76px;font-size:13px;text-align:right;color:#000;-webkit-text-stroke:0.3px #000;"><span style="display:inline-block;transform:scaleX(1.0927);transform-origin:100% 0">4/5/2020</span></div>
<div class="t" style="left:100px;top:608px;width:65px;font-size:13px;text-align:center;color:#000;-webkit-text-stroke:0.3px #000;"><span style="display:inline-block;transform:scaleX(1.0165);transform-origin:50% 0">1010</span></div>
<div class="t" style="left:167px;top:607px;width:128px;font-size:14px;text-align:left;color:#000;-webkit-text-stroke:0.3px #000;"><span style="display:inline-block;transform:scaleX(1.0316);transform-origin:0 0">Catalina Wave</span></div>
<div class="t" style="left:295px;top:608px;width:74px;font-size:13px;text-align:right;color:#000;-webkit-text-stroke:0.3px #000;"><span style="display:inline-block;transform:scaleX(1.0165);transform-origin:100% 0">4</span></div>
<div class="t" style="left:371px;top:608px;width:78px;font-size:13px;text-align:right;color:#000;-webkit-text-stroke:0.3px #000;"><span style="display:inline-block;transform:scaleX(1.0165);transform-origin:100% 0">525</span></div>
<div class="t" style="left:22px;top:629px;width:76px;font-size:13px;text-align:right;color:#000;-webkit-text-stroke:0.3px #000;"><span style="display:inline-block;transform:scaleX(1.0927);transform-origin:100% 0">4/8/2020</span></div>
<div class="t" style="left:100px;top:629px;width:65px;font-size:13px;text-align:center;color:#000;-webkit-text-stroke:0.3px #000;"><span style="display:inline-block;transform:scaleX(1.0165);transform-origin:50% 0">1015</span></div>
<div class="t" style="left:167px;top:628px;width:128px;font-size:14px;text-align:left;color:#000;-webkit-text-stroke:0.3px #000;"><span style="display:inline-block;transform:scaleX(1.0002);transform-origin:0 0">Catalina Sky</span></div>
<div class="t" style="left:295px;top:629px;width:74px;font-size:13px;text-align:right;color:#000;-webkit-text-stroke:0.3px #000;"><span style="display:inline-block;transform:scaleX(1.0165);transform-origin:100% 0">6</span></div>
<div class="t" style="left:371px;top:629px;width:78px;font-size:13px;text-align:right;color:#000;-webkit-text-stroke:0.3px #000;"><span style="display:inline-block;transform:scaleX(1.0165);transform-origin:100% 0">850</span></div>
<div class="t" style="left:22px;top:650px;width:76px;font-size:13px;text-align:right;color:#000;-webkit-text-stroke:0.3px #000;"><span style="display:inline-block;transform:scaleX(1.0832);transform-origin:100% 0">4/11/2020</span></div>
<div class="t" style="left:100px;top:650px;width:65px;font-size:13px;text-align:center;color:#000;-webkit-text-stroke:0.3px #000;"><span style="display:inline-block;transform:scaleX(1.0165);transform-origin:50% 0">1146</span></div>
<div class="t" style="left:167px;top:649px;width:128px;font-size:14px;text-align:left;color:#000;-webkit-text-stroke:0.3px #000;"><span style="display:inline-block;transform:scaleX(1.0359);transform-origin:0 0">Hunter Ray</span></div>
<div class="t" style="left:295px;top:650px;width:74px;font-size:13px;text-align:right;color:#000;-webkit-text-stroke:0.3px #000;"><span style="display:inline-block;transform:scaleX(1.0165);transform-origin:100% 0">6</span></div>
<div class="t" style="left:371px;top:650px;width:78px;font-size:13px;text-align:right;color:#000;-webkit-text-stroke:0.3px #000;"><span style="display:inline-block;transform:scaleX(1.0165);transform-origin:100% 0">500</span></div>
<div class="t" style="left:22px;top:671px;width:76px;font-size:13px;text-align:right;color:#000;-webkit-text-stroke:0.3px #000;"><span style="display:inline-block;transform:scaleX(1.0832);transform-origin:100% 0">4/14/2020</span></div>
<div class="t" style="left:100px;top:671px;width:65px;font-size:13px;text-align:center;color:#000;-webkit-text-stroke:0.3px #000;"><span style="display:inline-block;transform:scaleX(1.0165);transform-origin:50% 0">1150</span></div>
<div class="t" style="left:167px;top:670px;width:128px;font-size:14px;text-align:left;color:#000;-webkit-text-stroke:0.3px #000;"><span style="display:inline-block;transform:scaleX(1.0071);transform-origin:0 0">Capri MKZ</span></div>
<div class="t" style="left:295px;top:671px;width:74px;font-size:13px;text-align:right;color:#000;-webkit-text-stroke:0.3px #000;"><span style="display:inline-block;transform:scaleX(1.0165);transform-origin:100% 0">6</span></div>
<div class="t" style="left:371px;top:671px;width:78px;font-size:13px;text-align:right;color:#000;-webkit-text-stroke:0.3px #000;"><span style="display:inline-block;transform:scaleX(1.0165);transform-origin:100% 0">525</span></div>
<div class="t" style="left:22px;top:692px;width:76px;font-size:13px;text-align:right;color:#000;-webkit-text-stroke:0.3px #000;"><span style="display:inline-block;transform:scaleX(1.0832);transform-origin:100% 0">4/17/2020</span></div>
<div class="t" style="left:100px;top:692px;width:65px;font-size:13px;text-align:center;color:#000;-webkit-text-stroke:0.3px #000;"><span style="display:inline-block;transform:scaleX(1.0165);transform-origin:50% 0">1152</span></div>
<div class="t" style="left:167px;top:691px;width:128px;font-size:14px;text-align:left;color:#000;-webkit-text-stroke:0.3px #000;"><span style="display:inline-block;transform:scaleX(1.0351);transform-origin:0 0">Capri 22 Mk II</span></div>
<div class="t" style="left:295px;top:692px;width:74px;font-size:13px;text-align:right;color:#000;-webkit-text-stroke:0.3px #000;"><span style="display:inline-block;transform:scaleX(1.0165);transform-origin:100% 0">4</span></div>
<div class="t" style="left:371px;top:692px;width:78px;font-size:13px;text-align:right;color:#000;-webkit-text-stroke:0.3px #000;"><span style="display:inline-block;transform:scaleX(1.0165);transform-origin:100% 0">325</span></div>
<div class="t" style="left:22px;top:713px;width:76px;font-size:13px;text-align:right;color:#000;-webkit-text-stroke:0.3px #000;"><span style="display:inline-block;transform:scaleX(1.0832);transform-origin:100% 0">4/20/2020</span></div>
<div class="t" style="left:100px;top:713px;width:65px;font-size:13px;text-align:center;color:#000;-webkit-text-stroke:0.3px #000;"><span style="display:inline-block;transform:scaleX(1.0165);transform-origin:50% 0">1164</span></div>
<div class="t" style="left:167px;top:712px;width:128px;font-size:14px;text-align:left;color:#000;-webkit-text-stroke:0.3px #000;"><span style="display:inline-block;transform:scaleX(1.0351);transform-origin:0 0">Capri 22 Mk II</span></div>
<div class="t" style="left:295px;top:713px;width:74px;font-size:13px;text-align:right;color:#000;-webkit-text-stroke:0.3px #000;"><span style="display:inline-block;transform:scaleX(1.0165);transform-origin:100% 0">3</span></div>
<div class="t" style="left:371px;top:713px;width:78px;font-size:13px;text-align:right;color:#000;-webkit-text-stroke:0.3px #000;"><span style="display:inline-block;transform:scaleX(1.0165);transform-origin:100% 0">475</span></div>
<div class="t" style="left:22px;top:734px;width:76px;font-size:13px;text-align:right;color:#000;-webkit-text-stroke:0.3px #000;"><span style="display:inline-block;transform:scaleX(1.0832);transform-origin:100% 0">4/23/2020</span></div>
<div class="t" style="left:100px;top:734px;width:65px;font-size:13px;text-align:center;color:#000;-webkit-text-stroke:0.3px #000;"><span style="display:inline-block;transform:scaleX(1.0165);transform-origin:50% 0">1168</span></div>
<div class="t" style="left:167px;top:733px;width:128px;font-size:14px;text-align:left;color:#000;-webkit-text-stroke:0.3px #000;"><span style="display:inline-block;transform:scaleX(1.0673);transform-origin:0 0">Hunter 33</span></div>
<div class="t" style="left:295px;top:734px;width:74px;font-size:13px;text-align:right;color:#000;-webkit-text-stroke:0.3px #000;"><span style="display:inline-block;transform:scaleX(1.0165);transform-origin:100% 0">6</span></div>
<div class="t" style="left:371px;top:734px;width:78px;font-size:13px;text-align:right;color:#000;-webkit-text-stroke:0.3px #000;"><span style="display:inline-block;transform:scaleX(1.0165);transform-origin:100% 0">725</span></div>
<div class="t" style="left:22px;top:755px;width:76px;font-size:13px;text-align:right;color:#000;-webkit-text-stroke:0.3px #000;"><span style="display:inline-block;transform:scaleX(1.0832);transform-origin:100% 0">4/26/2020</span></div>
<div class="t" style="left:100px;top:755px;width:65px;font-size:13px;text-align:center;color:#000;-webkit-text-stroke:0.3px #000;"><span style="display:inline-block;transform:scaleX(1.0165);transform-origin:50% 0">1175</span></div>
<div class="t" style="left:167px;top:754px;width:128px;font-size:14px;text-align:left;color:#000;-webkit-text-stroke:0.3px #000;"><span style="display:inline-block;transform:scaleX(1.0386);transform-origin:0 0">Beneteau 40</span></div>
<div class="t" style="left:295px;top:755px;width:74px;font-size:13px;text-align:right;color:#000;-webkit-text-stroke:0.3px #000;"><span style="display:inline-block;transform:scaleX(1.0165);transform-origin:100% 0">10</span></div>
<div class="t" style="left:371px;top:755px;width:78px;font-size:13px;text-align:right;color:#000;-webkit-text-stroke:0.3px #000;"><span style="display:inline-block;transform:scaleX(1.0165);transform-origin:100% 0">850</span></div>
<div class="t" style="left:22px;top:776px;width:76px;font-size:13px;text-align:right;color:#000;-webkit-text-stroke:0.3px #000;"><span style="display:inline-block;transform:scaleX(1.0832);transform-origin:100% 0">4/29/2020</span></div>
<div class="t" style="left:100px;top:776px;width:65px;font-size:13px;text-align:center;color:#000;-webkit-text-stroke:0.3px #000;"><span style="display:inline-block;transform:scaleX(1.0165);transform-origin:50% 0">1180</span></div>
<div class="t" style="left:167px;top:775px;width:128px;font-size:14px;text-align:left;color:#000;-webkit-text-stroke:0.3px #000;"><span style="display:inline-block;transform:scaleX(1.0377);transform-origin:0 0">Beneteau 373</span></div>
<div class="t" style="left:295px;top:776px;width:74px;font-size:13px;text-align:right;color:#000;-webkit-text-stroke:0.3px #000;"><span style="display:inline-block;transform:scaleX(1.0165);transform-origin:100% 0">8</span></div>
<div class="t" style="left:371px;top:776px;width:78px;font-size:13px;text-align:right;color:#000;-webkit-text-stroke:0.3px #000;"><span style="display:inline-block;transform:scaleX(1.0165);transform-origin:100% 0">350</span></div>
<div class="t" style="left:22px;top:797px;width:76px;font-size:13px;text-align:right;color:#000;-webkit-text-stroke:0.3px #000;"><span style="display:inline-block;transform:scaleX(1.0927);transform-origin:100% 0">5/2/2020</span></div>
<div class="t" style="left:100px;top:797px;width:65px;font-size:13px;text-align:center;color:#000;-webkit-text-stroke:0.3px #000;"><span style="display:inline-block;transform:scaleX(1.0165);transform-origin:50% 0">1185</span></div>
<div class="t" style="left:167px;top:796px;width:128px;font-size:14px;text-align:left;color:#000;-webkit-text-stroke:0.3px #000;"><span style="display:inline-block;transform:scaleX(1.0269);transform-origin:0 0">Hunter Sea</span></div>
<div class="t" style="left:295px;top:797px;width:74px;font-size:13px;text-align:right;color:#000;-webkit-text-stroke:0.3px #000;"><span style="display:inline-block;transform:scaleX(1.0165);transform-origin:100% 0">8</span></div>
<div class="t" style="left:371px;top:797px;width:78px;font-size:13px;text-align:right;color:#000;-webkit-text-stroke:0.3px #000;"><span style="display:inline-block;transform:scaleX(1.0165);transform-origin:100% 0">650</span></div>
<div class="t" style="left:22px;top:818px;width:76px;font-size:13px;text-align:right;color:#000;-webkit-text-stroke:0.3px #000;"><span style="display:inline-block;transform:scaleX(1.0927);transform-origin:100% 0">5/5/2020</span></div>
<div class="t" style="left:100px;top:818px;width:65px;font-size:13px;text-align:center;color:#000;-webkit-text-stroke:0.3px #000;"><span style="display:inline-block;transform:scaleX(1.0165);transform-origin:50% 0">1190</span></div>
<div class="t" style="left:167px;top:817px;width:128px;font-size:14px;text-align:left;color:#000;-webkit-text-stroke:0.3px #000;"><span style="display:inline-block;transform:scaleX(1.0377);transform-origin:0 0">Beneteau 373</span></div>
<div class="t" style="left:295px;top:818px;width:74px;font-size:13px;text-align:right;color:#000;-webkit-text-stroke:0.3px #000;"><span style="display:inline-block;transform:scaleX(1.0165);transform-origin:100% 0">10</span></div>
<div class="t" style="left:371px;top:818px;width:78px;font-size:13px;text-align:right;color:#000;-webkit-text-stroke:0.3px #000;"><span style="display:inline-block;transform:scaleX(1.0165);transform-origin:100% 0">625</span></div>
<div class="t" style="left:22px;top:839px;width:76px;font-size:13px;text-align:right;color:#000;-webkit-text-stroke:0.3px #000;"><span style="display:inline-block;transform:scaleX(1.0927);transform-origin:100% 0">5/8/2020</span></div>
<div class="t" style="left:100px;top:839px;width:65px;font-size:13px;text-align:center;color:#000;-webkit-text-stroke:0.3px #000;"><span style="display:inline-block;transform:scaleX(1.0165);transform-origin:50% 0">1200</span></div>
<div class="t" style="left:167px;top:838px;width:128px;font-size:14px;text-align:left;color:#000;-webkit-text-stroke:0.3px #000;"><span style="display:inline-block;transform:scaleX(1.0377);transform-origin:0 0">Beneteau 373</span></div>
<div class="t" style="left:295px;top:839px;width:74px;font-size:13px;text-align:right;color:#000;-webkit-text-stroke:0.3px #000;"><span style="display:inline-block;transform:scaleX(1.0165);transform-origin:100% 0">8</span></div>
<div class="t" style="left:371px;top:839px;width:78px;font-size:13px;text-align:right;color:#000;-webkit-text-stroke:0.3px #000;"><span style="display:inline-block;transform:scaleX(1.0165);transform-origin:100% 0">725</span></div>
<div class="t" style="left:22px;top:860px;width:76px;font-size:13px;text-align:right;color:#000;-webkit-text-stroke:0.3px #000;"><span style="display:inline-block;transform:scaleX(1.0832);transform-origin:100% 0">5/11/2020</span></div>
<div class="t" style="left:100px;top:860px;width:65px;font-size:13px;text-align:center;color:#000;-webkit-text-stroke:0.3px #000;"><span style="display:inline-block;transform:scaleX(1.0165);transform-origin:50% 0">1205</span></div>
<div class="t" style="left:167px;top:859px;width:128px;font-size:14px;text-align:left;color:#000;-webkit-text-stroke:0.3px #000;"><span style="display:inline-block;transform:scaleX(1.0386);transform-origin:0 0">Beneteau 40</span></div>
<div class="t" style="left:295px;top:860px;width:74px;font-size:13px;text-align:right;color:#000;-webkit-text-stroke:0.3px #000;"><span style="display:inline-block;transform:scaleX(1.0165);transform-origin:100% 0">12</span></div>
<div class="t" style="left:371px;top:860px;width:78px;font-size:13px;text-align:right;color:#000;-webkit-text-stroke:0.3px #000;"><span style="display:inline-block;transform:scaleX(1.0165);transform-origin:100% 0">850</span></div>
<div class="t" style="left:22px;top:881px;width:76px;font-size:13px;text-align:right;color:#000;-webkit-text-stroke:0.3px #000;"><span style="display:inline-block;transform:scaleX(1.0832);transform-origin:100% 0">5/14/2020</span></div>
<div class="t" style="left:100px;top:881px;width:65px;font-size:13px;text-align:center;color:#000;-webkit-text-stroke:0.3px #000;"><span style="display:inline-block;transform:scaleX(1.0165);transform-origin:50% 0">1225</span></div>
<div class="t" style="left:167px;top:880px;width:128px;font-size:14px;text-align:left;color:#000;-webkit-text-stroke:0.3px #000;"><span style="display:inline-block;transform:scaleX(1.0269);transform-origin:0 0">Hunter Sea</span></div>
<div class="t" style="left:295px;top:881px;width:74px;font-size:13px;text-align:right;color:#000;-webkit-text-stroke:0.3px #000;"><span style="display:inline-block;transform:scaleX(1.0165);transform-origin:100% 0">8</span></div>
<div class="t" style="left:371px;top:881px;width:78px;font-size:13px;text-align:right;color:#000;-webkit-text-stroke:0.3px #000;"><span style="display:inline-block;transform:scaleX(1.0165);transform-origin:100% 0">725</span></div>
<div class="t" style="left:22px;top:902px;width:76px;font-size:13px;text-align:right;color:#000;-webkit-text-stroke:0.3px #000;"><span style="display:inline-block;transform:scaleX(1.0832);transform-origin:100% 0">5/17/2020</span></div>
<div class="t" style="left:100px;top:902px;width:65px;font-size:13px;text-align:center;color:#000;-webkit-text-stroke:0.3px #000;"><span style="display:inline-block;transform:scaleX(1.0165);transform-origin:50% 0">1230</span></div>
<div class="t" style="left:167px;top:901px;width:128px;font-size:14px;text-align:left;color:#000;-webkit-text-stroke:0.3px #000;"><span style="display:inline-block;transform:scaleX(1.0316);transform-origin:0 0">Catalina Wave</span></div>
<div class="t" style="left:295px;top:902px;width:74px;font-size:13px;text-align:right;color:#000;-webkit-text-stroke:0.3px #000;"><span style="display:inline-block;transform:scaleX(1.0165);transform-origin:100% 0">6</span></div>
<div class="t" style="left:371px;top:902px;width:78px;font-size:13px;text-align:right;color:#000;-webkit-text-stroke:0.3px #000;"><span style="display:inline-block;transform:scaleX(1.0165);transform-origin:100% 0">675</span></div>
<div class="t" style="left:167px;top:1030px;width:133px;font-size:13px;text-align:left;color:#000;-webkit-text-stroke:0.3px #000;"><span style="display:inline-block;transform:scaleX(1.0639);transform-origin:0 0">Bookings by Make</span></div>
<div class="t" style="left:374px;top:1050px;width:77px;font-size:13px;text-align:left;color:#000;-webkit-text-stroke:0.3px #000;"><span style="display:inline-block;transform:scaleX(1.0896);transform-origin:0 0">Total</span></div>
<div class="t" style="left:374px;top:1070px;width:77px;font-size:13px;text-align:left;color:#000;-webkit-text-stroke:0.3px #000;"><span style="display:inline-block;transform:scaleX(1.0403);transform-origin:0 0">Revenue</span></div>
<div class="t" style="left:298px;top:1070px;width:73px;font-size:13px;text-align:left;color:#000;-webkit-text-stroke:0.3px #000;"><span style="display:inline-block;transform:scaleX(1.0789);transform-origin:0 0">Count</span></div>
<div class="t" style="left:167px;top:1090px;width:128px;font-size:13px;text-align:left;color:#000;-webkit-text-stroke:0.3px #000;"><span style="display:inline-block;transform:scaleX(1.0724);transform-origin:0 0">Beneteau</span></div>
<div class="t" style="left:167px;top:1110px;width:128px;font-size:13px;text-align:left;color:#000;-webkit-text-stroke:0.3px #000;"><span style="display:inline-block;transform:scaleX(1.0420);transform-origin:0 0">Capri</span></div>
<div class="t" style="left:167px;top:1130px;width:128px;font-size:13px;text-align:left;color:#000;-webkit-text-stroke:0.3px #000;"><span style="display:inline-block;transform:scaleX(1.0552);transform-origin:0 0">Catalina</span></div>
<div class="t" style="left:167px;top:1150px;width:128px;font-size:13px;text-align:left;color:#000;-webkit-text-stroke:0.3px #000;"><span style="display:inline-block;transform:scaleX(1.1195);transform-origin:0 0">Hunter</span></div>
<div style="left:22px;top:490px;width:80px;height:23px;box-sizing:border-box;border:2px solid #217346;"></div>
<div style="left:98px;top:509px;width:5px;height:5px;background:#217346;outline:1px solid #fff"></div>
<div class="t" style="left:585px;top:582px;width:415px;font-size:14.4px;text-align:left;color:#222;">Build a formula with mixed references.</div>
<div style="left:605px;top:602px;width:720px;height:26px;background:#ffff00;"></div>
<div class="t" style="left:560px;top:614px;width:41px;font-size:13.2px;text-align:right;color:#333;">a.</div>
<div style="left:605px;top:602px;width:15px;height:16px;box-sizing:border-box;border:1.5px solid #8a8a8a;border-radius:3px;background:#fff"></div>
<div class="t" style="left:628px;top:610px;width:712px;font-size:14.4px;text-align:left;color:#222;">Click cell <b>F5</b> and type <span style="color:#d9532c">=(1+</span> to start the formula.</div>
<div class="t" style="left:560px;top:648px;width:41px;font-size:13.2px;text-align:right;color:#333;">b.</div>
<div style="left:605px;top:636px;width:15px;height:16px;box-sizing:border-box;border:1.5px solid #8a8a8a;border-radius:3px;background:#fff"></div>
<div class="t" style="left:628px;top:644px;width:712px;font-size:14.4px;text-align:left;color:#222;">Select cell <b>F4</b> and make it an absolute reference to the row but not the column.</div>
<div class="t" style="left:560px;top:682px;width:41px;font-size:13.2px;text-align:right;color:#333;">c.</div>
<div style="left:605px;top:670px;width:15px;height:16px;box-sizing:border-box;border:1.5px solid #8a8a8a;border-radius:3px;background:#fff"></div>
<div class="t" style="left:628px;top:678px;width:712px;font-size:14.4px;text-align:left;color:#222;">Type <span style="color:#c0404a">)*</span> for the closing parenthesis and multiplication.</div>
<div class="t" style="left:560px;top:716px;width:41px;font-size:13.2px;text-align:right;color:#333;">d.</div>
<div style="left:605px;top:704px;width:15px;height:16px;box-sizing:border-box;border:1.5px solid #8a8a8a;border-radius:3px;background:#fff"></div>
<div class="t" style="left:628px;top:712px;width:712px;font-size:14.4px;text-align:left;color:#222;">Click cell <b>I5</b> on the <b>Fleet</b> sheet, and make the reference absolute for the column but not the row (Figure 2-</div>
<div class="t" style="left:628px;top:731px;width:712px;font-size:14.4px;text-align:left;color:#222;">106).</div>
<div class="t" style="left:560px;top:769px;width:41px;font-size:13.2px;text-align:right;color:#333;">e.</div>
<div style="left:605px;top:757px;width:15px;height:16px;box-sizing:border-box;border:1.5px solid #8a8a8a;border-radius:3px;background:#fff"></div>
<div class="t" style="left:628px;top:765px;width:712px;font-size:14.4px;text-align:left;color:#222;">Copy the formula down column <b>F</b> without formatting to</div>
<div class="t" style="left:628px;top:783px;width:712px;font-size:14.4px;text-align:left;color:#222;">preserve the border.</div>
<div class="t" style="left:560px;top:823px;width:41px;font-size:13.2px;text-align:right;color:#333;">f.</div>
<div style="left:605px;top:811px;width:15px;height:16px;box-sizing:border-box;border:1.5px solid #8a8a8a;border-radius:3px;background:#fff"></div>
<div class="t" style="left:628px;top:820px;width:712px;font-size:14.4px;text-align:left;color:#222;">Format cells <b>F5:F19</b> as <b>Currency</b> and then copy cells</div>
<div class="t" style="left:628px;top:838px;width:712px;font-size:14.4px;text-align:left;color:#222;"><b>F5:F19</b> to cells <b>G5:G19</b>.</div>
<div class="t" style="left:585px;top:874px;width:415px;font-size:14.4px;text-align:left;color:#222;">Build an <i>IF</i> function formula.</div>
<div class="t" style="left:560px;top:906px;width:41px;font-size:13.2px;text-align:right;color:#333;">a.</div>
<div style="left:605px;top:894px;width:15px;height:16px;box-sizing:border-box;border:1.5px solid #8a8a8a;border-radius:3px;background:#fff"></div>
<div class="t" style="left:628px;top:902px;width:712px;font-size:14.4px;text-align:left;color:#222;">Click the <b>Fleet</b> sheet tab and select cell <b>G5</b>. Rental</div>
<div class="t" style="left:628px;top:921px;width:712px;font-size:14.4px;text-align:left;color:#222;">boats with a stove in the galley must seat 8 or more</div>
<div class="t" style="left:628px;top:943px;width:712px;font-size:14.4px;text-align:left;color:#222;">people.</div>
<div class="t" style="left:560px;top:980px;width:41px;font-size:13.2px;text-align:right;color:#333;">b.</div>
<div style="left:605px;top:969px;width:15px;height:16px;box-sizing:border-box;border:1.5px solid #8a8a8a;border-radius:3px;background:#fff"></div>
<div class="t" style="left:628px;top:977px;width:712px;font-size:14.4px;text-align:left;color:#222;">Create an <i>IF</i> function in which the <i>logical_test</i> argument determines if there are 8 or more seats.</div>
<div class="t" style="left:560px;top:1015px;width:41px;font-size:13.2px;text-align:right;color:#333;">c.</div>
<div style="left:605px;top:1003px;width:15px;height:16px;box-sizing:border-box;border:1.5px solid #8a8a8a;border-radius:3px;background:#fff"></div>
<div class="t" style="left:628px;top:1011px;width:712px;font-size:14.4px;text-align:left;color:#222;">Use <span style="color:#c0404a">Yes</span> for the <i>value_if_true</i> argument. Use <span style="color:#c0404a">No</span> for the <i>value_if_false</i> argument. (If you type the formula,</div>
<div class="t" style="left:628px;top:1029px;width:712px;font-size:14.4px;text-align:left;color:#222;">enclose the text arguments within quotation marks.)</div>
<div class="t" style="left:560px;top:1069px;width:41px;font-size:13.2px;text-align:right;color:#333;">d.</div>
<div style="left:605px;top:1057px;width:15px;height:16px;box-sizing:border-box;border:1.5px solid #8a8a8a;border-radius:3px;background:#fff"></div>
<div class="t" style="left:628px;top:1065px;width:712px;font-size:14.4px;text-align:left;color:#222;">Copy the formula to cells <b>G6:G19</b> without formatting and then center the data in column G.</div>
<div style="left:585px;top:1091px;width:15px;height:16px;box-sizing:border-box;border:1.5px solid #8a8a8a;border-radius:3px;background:#fff"></div>
<div class="t" style="left:608px;top:1099px;width:732px;font-size:14.4px;text-align:left;color:#222;">Insert the <i>TODAY</i> function in cell <b>B21</b>. Format the date to show the month spelled out, the date, and four digits</div>
<div class="t" style="left:608px;top:1117px;width:732px;font-size:14.4px;text-align:left;color:#222;">for the year (January 1, 2020).</div>
<div style="left:1017px;top:772px;width:299px;height:115px;box-sizing:border-box;border:1px solid #2e7d4e;box-shadow:3px 4px 6px rgba(0,0,0,0.35);background:#fff"></div>
<div style="left:1018px;top:773px;width:297px;height:113px;overflow:hidden;background:#fff">
<div style="left:-1.1000000000000227px;top:17.899999999999977px;width:650px;height:490px;transform:scale(0.4559,0.4662);transform-origin:0 0;filter:blur(0.25px)">
<div style="left:0px;top:0px;width:649px;height:485px;background:#fff;"></div>
<div style="left:25px;top:62px;width:624px;height:1px;background:#d4d4d4;"></div>
<div style="left:644px;top:24px;width:1px;height:98px;background:#d4d4d4;"></div>
<div style="left:25px;top:122px;width:624px;height:1px;background:#d4d4d4;"></div>
<div style="left:89px;top:103px;width:1px;height:19px;background:#d4d4d4;"></div>
<div style="left:220px;top:103px;width:1px;height:19px;background:#d4d4d4;"></div>
<div style="left:284px;top:103px;width:1px;height:19px;background:#d4d4d4;"></div>
<div style="left:332px;top:103px;width:1px;height:19px;background:#d4d4d4;"></div>
<div style="left:372px;top:103px;width:1px;height:19px;background:#d4d4d4;"></div>
<div style="left:420px;top:103px;width:1px;height:19px;background:#d4d4d4;"></div>
<div style="left:493px;top:103px;width:1px;height:19px;background:#d4d4d4;"></div>
<div style="left:557px;top:103px;width:1px;height:19px;background:#d4d4d4;"></div>
<div style="left:89px;top:482px;width:1px;height:3px;background:#d4d4d4;"></div>
<div style="left:220px;top:482px;width:1px;height:3px;background:#d4d4d4;"></div>
<div style="left:284px;top:482px;width:1px;height:3px;background:#d4d4d4;"></div>
<div style="left:332px;top:482px;width:1px;height:3px;background:#d4d4d4;"></div>
<div style="left:372px;top:482px;width:1px;height:3px;background:#d4d4d4;"></div>
<div style="left:420px;top:482px;width:1px;height:3px;background:#d4d4d4;"></div>
<div style="left:493px;top:482px;width:1px;height:3px;background:#d4d4d4;"></div>
<div style="left:557px;top:482px;width:1px;height:3px;background:#d4d4d4;"></div>
<div style="left:644px;top:482px;width:1px;height:3px;background:#d4d4d4;"></div>
<div style="left:26px;top:123px;width:618px;height:43px;background:#bdd5ee;"></div>
<div style="left:26px;top:100px;width:619px;height:3px;background:#4a7ec9;"></div>
<div style="left:25px;top:122px;width:620px;height:1px;background:#000;"></div>
<div style="left:25px;top:166px;width:620px;height:1px;background:#000;"></div>
<div style="left:26px;top:187px;width:618px;height:1px;background:#9a9a9a;"></div>
<div style="left:644px;top:187px;width:5px;height:1px;background:#d4d4d4;"></div>
<div style="left:26px;top:208px;width:618px;height:1px;background:#9a9a9a;"></div>
<div style="left:644px;top:208px;width:5px;height:1px;background:#d4d4d4;"></div>
<div style="left:26px;top:229px;width:618px;height:1px;background:#9a9a9a;"></div>
<div style="left:644px;top:229px;width:5px;height:1px;background:#d4d4d4;"></div>
<div style="left:26px;top:250px;width:618px;height:1px;background:#9a9a9a;"></div>
<div style="left:644px;top:250px;width:5px;height:1px;background:#d4d4d4;"></div>
<div style="left:26px;top:271px;width:618px;height:1px;background:#9a9a9a;"></div>
<div style="left:644px;top:271px;width:5px;height:1px;background:#d4d4d4;"></div>
<div style="left:26px;top:292px;width:618px;height:1px;background:#9a9a9a;"></div>
<div style="left:644px;top:292px;width:5px;height:1px;background:#d4d4d4;"></div>
<div style="left:26px;top:313px;width:618px;height:1px;background:#9a9a9a;"></div>
<div style="left:644px;top:313px;width:5px;height:1px;background:#d4d4d4;"></div>
<div style="left:26px;top:334px;width:618px;height:1px;background:#9a9a9a;"></div>
<div style="left:644px;top:334px;width:5px;height:1px;background:#d4d4d4;"></div>
<div style="left:26px;top:355px;width:618px;height:1px;background:#9a9a9a;"></div>
<div style="left:644px;top:355px;width:5px;height:1px;background:#d4d4d4;"></div>
<div style="left:26px;top:376px;width:618px;height:1px;background:#9a9a9a;"></div>
<div style="left:644px;top:376px;width:5px;height:1px;background:#d4d4d4;"></div>
<div style="left:26px;top:397px;width:618px;height:1px;background:#9a9a9a;"></div>
<div style="left:644px;top:397px;width:5px;height:1px;background:#d4d4d4;"></div>
<div style="left:26px;top:418px;width:618px;height:1px;background:#9a9a9a;"></div>
<div style="left:644px;top:418px;width:5px;height:1px;background:#d4d4d4;"></div>
<div style="left:26px;top:439px;width:618px;height:1px;background:#9a9a9a;"></div>
<div style="left:644px;top:439px;width:5px;height:1px;background:#d4d4d4;"></div>
<div style="left:26px;top:460px;width:618px;height:1px;background:#9a9a9a;"></div>
<div style="left:644px;top:460px;width:5px;height:1px;background:#d4d4d4;"></div>
<div style="left:25px;top:481px;width:619px;height:1px;background:#000;"></div>
<div style="left:89px;top:122px;width:1px;height:360px;background:#000;"></div>
<div style="left:220px;top:122px;width:1px;height:360px;background:#000;"></div>
<div style="left:284px;top:122px;width:1px;height:360px;background:#000;"></div>
<div style="left:332px;top:122px;width:1px;height:360px;background:#000;"></div>
<div style="left:372px;top:122px;width:1px;height:360px;background:#000;"></div>
<div style="left:420px;top:122px;width:1px;height:360px;background:#000;"></div>
<div style="left:493px;top:122px;width:1px;height:360px;background:#000;"></div>
<div style="left:557px;top:122px;width:1px;height:360px;background:#000;"></div>
<div style="left:644px;top:122px;width:1px;height:45px;background:#000;"></div>
<div style="left:644px;top:167px;width:1px;height:318px;background:#d4d4d4;"></div>
<div style="left:645px;top:62px;width:4px;height:1px;background:#d4d4d4;"></div>
<div style="left:645px;top:101px;width:4px;height:1px;background:#d4d4d4;"></div>
<div style="left:645px;top:122px;width:4px;height:1px;background:#d4d4d4;"></div>
<div style="left:645px;top:166px;width:4px;height:1px;background:#d4d4d4;"></div>
<div style="left:645px;top:187px;width:4px;height:1px;background:#d4d4d4;"></div>
<div style="left:645px;top:208px;width:4px;height:1px;background:#d4d4d4;"></div>
<div style="left:645px;top:229px;width:4px;height:1px;background:#d4d4d4;"></div>
<div style="left:645px;top:250px;width:4px;height:1px;background:#d4d4d4;"></div>
<div style="left:645px;top:271px;width:4px;height:1px;background:#d4d4d4;"></div>
<div style="left:645px;top:292px;width:4px;height:1px;background:#d4d4d4;"></div>
<div style="left:645px;top:313px;width:4px;height:1px;background:#d4d4d4;"></div>
<div style="left:645px;top:334px;width:4px;height:1px;background:#d4d4d4;"></div>
<div style="left:645px;top:355px;width:4px;height:1px;background:#d4d4d4;"></div>
<div style="left:645px;top:376px;width:4px;height:1px;background:#d4d4d4;"></div>
<div style="left:645px;top:397px;width:4px;height:1px;background:#d4d4d4;"></div>
<div style="left:645px;top:418px;width:4px;height:1px;background:#d4d4d4;"></div>
<div style="left:645px;top:439px;width:4px;height:1px;background:#d4d4d4;"></div>
<div style="left:645px;top:460px;width:4px;height:1px;background:#d4d4d4;"></div>
<div style="left:645px;top:481px;width:4px;height:1px;background:#d4d4d4;"></div>
<div style="left:0px;top:24px;width:25px;height:461px;background:#e6e6e6;"></div>
<div style="left:0px;top:62px;width:25px;height:1px;background:#b9b9b9;"></div>
<div class="t" style="left:0px;top:50px;width:26px;font-size:12.5px;text-align:center;color:#1a1a1a;-webkit-text-stroke:0.2px #1a1a1a">1</div>
<div style="left:0px;top:101px;width:25px;height:1px;background:#b9b9b9;"></div>
<div class="t" style="left:0px;top:88px;width:26px;font-size:12.5px;text-align:center;color:#1a1a1a;-webkit-text-stroke:0.2px #1a1a1a">2</div>
<div style="left:0px;top:122px;width:25px;height:1px;background:#b9b9b9;"></div>
<div class="t" style="left:0px;top:114px;width:26px;font-size:12.5px;text-align:center;color:#1a1a1a;-webkit-text-stroke:0.2px #1a1a1a">3</div>
<div style="left:0px;top:166px;width:25px;height:1px;background:#b9b9b9;"></div>
<div class="t" style="left:0px;top:158px;width:26px;font-size:12.5px;text-align:center;color:#1a1a1a;-webkit-text-stroke:0.2px #1a1a1a">4</div>
<div style="left:0px;top:187px;width:25px;height:1px;background:#b9b9b9;"></div>
<div class="t" style="left:0px;top:179px;width:26px;font-size:12.5px;text-align:center;color:#1a1a1a;-webkit-text-stroke:0.2px #1a1a1a">5</div>
<div style="left:0px;top:208px;width:25px;height:1px;background:#b9b9b9;"></div>
<div class="t" style="left:0px;top:200px;width:26px;font-size:12.5px;text-align:center;color:#1a1a1a;-webkit-text-stroke:0.2px #1a1a1a">6</div>
<div style="left:0px;top:229px;width:25px;height:1px;background:#b9b9b9;"></div>
<div class="t" style="left:0px;top:221px;width:26px;font-size:12.5px;text-align:center;color:#1a1a1a;-webkit-text-stroke:0.2px #1a1a1a">7</div>
<div style="left:0px;top:250px;width:25px;height:1px;background:#b9b9b9;"></div>
<div class="t" style="left:0px;top:242px;width:26px;font-size:12.5px;text-align:center;color:#1a1a1a;-webkit-text-stroke:0.2px #1a1a1a">8</div>
<div style="left:0px;top:271px;width:25px;height:1px;background:#b9b9b9;"></div>
<div class="t" style="left:0px;top:263px;width:26px;font-size:12.5px;text-align:center;color:#1a1a1a;-webkit-text-stroke:0.2px #1a1a1a">9</div>
<div style="left:0px;top:292px;width:25px;height:1px;background:#b9b9b9;"></div>
<div class="t" style="left:0px;top:284px;width:26px;font-size:12.5px;text-align:center;color:#1a1a1a;-webkit-text-stroke:0.2px #1a1a1a">10</div>
<div style="left:0px;top:313px;width:25px;height:1px;background:#b9b9b9;"></div>
<div class="t" style="left:0px;top:305px;width:26px;font-size:12.5px;text-align:center;color:#1a1a1a;-webkit-text-stroke:0.2px #1a1a1a">11</div>
<div style="left:0px;top:334px;width:25px;height:1px;background:#b9b9b9;"></div>
<div class="t" style="left:0px;top:326px;width:26px;font-size:12.5px;text-align:center;color:#1a1a1a;-webkit-text-stroke:0.2px #1a1a1a">12</div>
<div style="left:0px;top:355px;width:25px;height:1px;background:#b9b9b9;"></div>
<div class="t" style="left:0px;top:347px;width:26px;font-size:12.5px;text-align:center;color:#1a1a1a;-webkit-text-stroke:0.2px #1a1a1a">13</div>
<div style="left:0px;top:376px;width:25px;height:1px;background:#b9b9b9;"></div>
<div class="t" style="left:0px;top:368px;width:26px;font-size:12.5px;text-align:center;color:#1a1a1a;-webkit-text-stroke:0.2px #1a1a1a">14</div>
<div style="left:0px;top:397px;width:25px;height:1px;background:#b9b9b9;"></div>
<div class="t" style="left:0px;top:389px;width:26px;font-size:12.5px;text-align:center;color:#1a1a1a;-webkit-text-stroke:0.2px #1a1a1a">15</div>
<div style="left:0px;top:418px;width:25px;height:1px;background:#b9b9b9;"></div>
<div class="t" style="left:0px;top:410px;width:26px;font-size:12.5px;text-align:center;color:#1a1a1a;-webkit-text-stroke:0.2px #1a1a1a">16</div>
<div style="left:0px;top:439px;width:25px;height:1px;background:#b9b9b9;"></div>
<div class="t" style="left:0px;top:431px;width:26px;font-size:12.5px;text-align:center;color:#1a1a1a;-webkit-text-stroke:0.2px #1a1a1a">17</div>
<div style="left:0px;top:460px;width:25px;height:1px;background:#b9b9b9;"></div>
<div class="t" style="left:0px;top:452px;width:26px;font-size:12.5px;text-align:center;color:#1a1a1a;-webkit-text-stroke:0.2px #1a1a1a">18</div>
<div style="left:0px;top:481px;width:25px;height:1px;background:#b9b9b9;"></div>
<div class="t" style="left:0px;top:473px;width:26px;font-size:12.5px;text-align:center;color:#1a1a1a;-webkit-text-stroke:0.2px #1a1a1a">19</div>
<div style="left:25px;top:24px;width:1px;height:461px;background:#9e9e9e;"></div>
<div style="left:0px;top:0px;width:649px;height:24px;background:#e6e6e6;"></div>
<svg style="left:10px;top:9px" width="12" height="12"><polygon points="12,0 12,12 0,12" fill="#b6b6b6"/></svg>
<div style="left:25px;top:5px;width:1px;height:19px;background:#c6c6c6;"></div>
<div style="left:89px;top:5px;width:1px;height:19px;background:#c6c6c6;"></div>
<div style="left:220px;top:5px;width:1px;height:19px;background:#c6c6c6;"></div>
<div style="left:284px;top:5px;width:1px;height:19px;background:#c6c6c6;"></div>
<div style="left:332px;top:5px;width:1px;height:19px;background:#c6c6c6;"></div>
<div style="left:372px;top:5px;width:1px;height:19px;background:#c6c6c6;"></div>
<div style="left:420px;top:5px;width:1px;height:19px;background:#c6c6c6;"></div>
<div style="left:493px;top:5px;width:1px;height:19px;background:#c6c6c6;"></div>
<div style="left:557px;top:5px;width:1px;height:19px;background:#c6c6c6;"></div>
<div style="left:644px;top:5px;width:1px;height:19px;background:#c6c6c6;"></div>
<div style="left:0px;top:24px;width:649px;height:1px;background:#9e9e9e;"></div>
<div class="t" style="left:25px;top:16px;width:65px;font-size:12px;text-align:center;color:#1a1a1a;-webkit-text-stroke:0.2px #1a1a1a">A</div>
<div class="t" style="left:89px;top:16px;width:132px;font-size:12px;text-align:center;color:#1a1a1a;-webkit-text-stroke:0.2px #1a1a1a">B</div>
<div class="t" style="left:220px;top:16px;width:65px;font-size:12px;text-align:center;color:#1a1a1a;-webkit-text-stroke:0.2px #1a1a1a">C</div>
<div class="t" style="left:284px;top:16px;width:49px;font-size:12px;text-align:center;color:#1a1a1a;-webkit-text-stroke:0.2px #1a1a1a">D</div>
<div class="t" style="left:332px;top:16px;width:41px;font-size:12px;text-align:center;color:#1a1a1a;-webkit-text-stroke:0.2px #1a1a1a">E</div>
<div class="t" style="left:372px;top:16px;width:49px;font-size:12px;text-align:center;color:#1a1a1a;-webkit-text-stroke:0.2px #1a1a1a">F</div>
<div class="t" style="left:420px;top:16px;width:74px;font-size:12px;text-align:center;color:#1a1a1a;-webkit-text-stroke:0.2px #1a1a1a">G</div>
<div class="t" style="left:493px;top:16px;width:65px;font-size:12px;text-align:center;color:#1a1a1a;-webkit-text-stroke:0.2px #1a1a1a">H</div>
<div class="t" style="left:557px;top:16px;width:88px;font-size:12px;text-align:center;color:#1a1a1a;-webkit-text-stroke:0.2px #1a1a1a">I</div>
<div class="t" style="left:25px;top:45px;width:620px;font-size:23.5px;text-align:center;color:#000;-webkit-text-stroke:0.5px #000;"><span style="display:inline-block;transform:scaleX(1.0642);transform-origin:50% 0">San Diego Sailing</span></div>
<div class="t" style="left:25px;top:83px;width:620px;font-size:23.5px;text-align:center;color:#000;-webkit-text-stroke:0.5px #000;"><span style="display:inline-block;transform:scaleX(1.1123);transform-origin:50% 0">Rental and Charter Fleet</span></div>
<div class="t" style="left:25px;top:158px;width:65px;font-size:12.8px;text-align:center;color:#000;font-weight:bold;-webkit-text-stroke:0.3px #000;"><span style="display:inline-block;transform:scaleX(1.0210);transform-origin:50% 0">Boat ID</span></div>
<div class="t" style="left:89px;top:158px;width:132px;font-size:12.8px;text-align:center;color:#000;font-weight:bold;-webkit-text-stroke:0.3px #000;"><span style="display:inline-block;transform:scaleX(1.0680);transform-origin:50% 0">Make and Model</span></div>
<div class="t" style="left:220px;top:158px;width:65px;font-size:12.8px;text-align:center;color:#000;font-weight:bold;-webkit-text-stroke:0.3px #000;"><span style="display:inline-block;transform:scaleX(0.9878);transform-origin:50% 0">Length</span></div>
<div class="t" style="left:284px;top:138px;width:49px;font-size:12.8px;text-align:center;color:#000;font-weight:bold;-webkit-text-stroke:0.3px #000;"><span style="display:inline-block;transform:scaleX(1.0898);transform-origin:50% 0">Model</span></div>
<div class="t" style="left:284px;top:158px;width:49px;font-size:12.8px;text-align:center;color:#000;font-weight:bold;-webkit-text-stroke:0.3px #000;"><span style="display:inline-block;transform:scaleX(1.0077);transform-origin:50% 0">Year</span></div>
<div class="t" style="left:332px;top:158px;width:41px;font-size:12.8px;text-align:center;color:#000;font-weight:bold;-webkit-text-stroke:0.3px #000;"><span style="display:inline-block;transform:scaleX(0.9690);transform-origin:50% 0">Seats</span></div>
<div class="t" style="left:372px;top:158px;width:49px;font-size:12.8px;text-align:center;color:#000;font-weight:bold;-webkit-text-stroke:0.3px #000;"><span style="display:inline-block;transform:scaleX(0.9632);transform-origin:50% 0">Sleeps</span></div>
<div class="t" style="left:420px;top:138px;width:74px;font-size:12.8px;text-align:center;color:#000;font-weight:bold;-webkit-text-stroke:0.3px #000;"><span style="display:inline-block;transform:scaleX(1.0106);transform-origin:50% 0">Galley</span></div>
<div class="t" style="left:420px;top:158px;width:74px;font-size:12.8px;text-align:center;color:#000;font-weight:bold;-webkit-text-stroke:0.3px #000;"><span style="display:inline-block;transform:scaleX(1.0349);transform-origin:50% 0">with Stove</span></div>
<div class="t" style="left:493px;top:138px;width:65px;font-size:12.8px;text-align:center;color:#000;font-weight:bold;-webkit-text-stroke:0.3px #000;"><span style="display:inline-block;transform:scaleX(1.0330);transform-origin:50% 0">Half-Day</span></div>
<div class="t" style="left:493px;top:158px;width:65px;font-size:12.8px;text-align:center;color:#000;font-weight:bold;-webkit-text-stroke:0.3px #000;"><span style="display:inline-block;transform:scaleX(1.0268);transform-origin:50% 0">Rate</span></div>
<div class="t" style="left:557px;top:138px;width:88px;font-size:12.8px;text-align:center;color:#000;font-weight:bold;-webkit-text-stroke:0.3px #000;"><span style="display:inline-block;transform:scaleX(0.9934);transform-origin:50% 0">Full Day</span></div>
<div class="t" style="left:557px;top:158px;width:88px;font-size:12.8px;text-align:center;color:#000;font-weight:bold;-webkit-text-stroke:0.3px #000;"><span style="display:inline-block;transform:scaleX(1.0268);transform-origin:50% 0">Rate</span></div>
<div class="t" style="left:25px;top:178px;width:65px;font-size:14px;text-align:center;color:#000;-webkit-text-stroke:0.5px #000;"><span style="display:inline-block;transform:scaleX(1.0285);transform-origin:50% 0">1010</span></div>
<div class="t" style="left:92px;top:178px;width:128px;font-size:14px;text-align:left;color:#000;-webkit-text-stroke:0.5px #000;"><span style="display:inline-block;transform:scaleX(1.0316);transform-origin:0 0">Catalina Wave</span></div>
<div class="t" style="left:220px;top:178px;width:63px;font-size:14px;text-align:right;color:#000;-webkit-text-stroke:0.5px #000;"><span style="display:inline-block;transform:scaleX(1.0978);transform-origin:100% 0">28&#x27;4&quot;</span></div>
<div class="t" style="left:284px;top:178px;width:47px;font-size:14px;text-align:right;color:#000;-webkit-text-stroke:0.5px #000;"><span style="display:inline-block;transform:scaleX(1.0285);transform-origin:100% 0">2010</span></div>
<div class="t" style="left:332px;top:178px;width:39px;font-size:14px;text-align:right;color:#000;-webkit-text-stroke:0.5px #000;"><span style="display:inline-block;transform:scaleX(1.0285);transform-origin:100% 0">8</span></div>
<div class="t" style="left:372px;top:178px;width:47px;font-size:14px;text-align:right;color:#000;-webkit-text-stroke:0.5px #000;"><span style="display:inline-block;transform:scaleX(1.0285);transform-origin:100% 0">6</span></div>
<div class="t" style="left:493px;top:178px;width:63px;font-size:14px;text-align:right;color:#000;-webkit-text-stroke:0.5px #000;"><span style="display:inline-block;transform:scaleX(1.0283);transform-origin:100% 0">$375.00</span></div>
<div class="t" style="left:557px;top:178px;width:86px;font-size:14px;text-align:right;color:#000;-webkit-text-stroke:0.5px #000;"><span style="display:inline-block;transform:scaleX(1.0283);transform-origin:100% 0">$650.00</span></div>
<div class="t" style="left:25px;top:199px;width:65px;font-size:14px;text-align:center;color:#000;-webkit-text-stroke:0.5px #000;"><span style="display:inline-block;transform:scaleX(1.0285);transform-origin:50% 0">1015</span></div>
<div class="t" style="left:92px;top:199px;width:128px;font-size:14px;text-align:left;color:#000;-webkit-text-stroke:0.5px #000;"><span style="display:inline-block;transform:scaleX(1.0002);transform-origin:0 0">Catalina Sky</span></div>
<div class="t" style="left:220px;top:199px;width:63px;font-size:14px;text-align:right;color:#000;-webkit-text-stroke:0.5px #000;"><span style="display:inline-block;transform:scaleX(1.0978);transform-origin:100% 0">28&#x27;4&quot;</span></div>
<div class="t" style="left:284px;top:199px;width:47px;font-size:14px;text-align:right;color:#000;-webkit-text-stroke:0.5px #000;"><span style="display:inline-block;transform:scaleX(1.0285);transform-origin:100% 0">2012</span></div>
<div class="t" style="left:332px;top:199px;width:39px;font-size:14px;text-align:right;color:#000;-webkit-text-stroke:0.5px #000;"><span style="display:inline-block;transform:scaleX(1.0285);transform-origin:100% 0">8</span></div>
<div class="t" style="left:372px;top:199px;width:47px;font-size:14px;text-align:right;color:#000;-webkit-text-stroke:0.5px #000;"><span style="display:inline-block;transform:scaleX(1.0285);transform-origin:100% 0">6</span></div>
<div class="t" style="left:493px;top:199px;width:63px;font-size:14px;text-align:right;color:#000;-webkit-text-stroke:0.5px #000;"><span style="display:inline-block;transform:scaleX(1.0283);transform-origin:100% 0">$425.00</span></div>
<div class="t" style="left:557px;top:199px;width:86px;font-size:14px;text-align:right;color:#000;-webkit-text-stroke:0.5px #000;"><span style="display:inline-block;transform:scaleX(1.0283);transform-origin:100% 0">$725.00</span></div>
<div class="t" style="left:25px;top:220px;width:65px;font-size:14px;text-align:center;color:#000;-webkit-text-stroke:0.5px #000;"><span style="display:inline-block;transform:scaleX(1.0285);transform-origin:50% 0">1146</span></div>
<div class="t" style="left:92px;top:220px;width:128px;font-size:14px;text-align:left;color:#000;-webkit-text-stroke:0.5px #000;"><span style="display:inline-block;transform:scaleX(1.0359);transform-origin:0 0">Hunter Ray</span></div>
<div class="t" style="left:220px;top:220px;width:63px;font-size:14px;text-align:right;color:#000;-webkit-text-stroke:0.5px #000;"><span style="display:inline-block;transform:scaleX(1.0978);transform-origin:100% 0">33&#x27;6&quot;</span></div>
<div class="t" style="left:284px;top:220px;width:47px;font-size:14px;text-align:right;color:#000;-webkit-text-stroke:0.5px #000;"><span style="display:inline-block;transform:scaleX(1.0285);transform-origin:100% 0">2014</span></div>
<div class="t" style="left:332px;top:220px;width:39px;font-size:14px;text-align:right;color:#000;-webkit-text-stroke:0.5px #000;"><span style="display:inline-block;transform:scaleX(1.0285);transform-origin:100% 0">10</span></div>
<div class="t" style="left:372px;top:220px;width:47px;font-size:14px;text-align:right;color:#000;-webkit-text-stroke:0.5px #000;"><span style="display:inline-block;transform:scaleX(1.0285);transform-origin:100% 0">6</span></div>
<div class="t" style="left:493px;top:220px;width:63px;font-size:14px;text-align:right;color:#000;-webkit-text-stroke:0.5px #000;"><span style="display:inline-block;transform:scaleX(1.0283);transform-origin:100% 0">$350.00</span></div>
<div class="t" style="left:557px;top:220px;width:86px;font-size:14px;text-align:right;color:#000;-webkit-text-stroke:0.5px #000;"><span style="display:inline-block;transform:scaleX(1.0283);transform-origin:100% 0">$500.00</span></div>
<div style="left:556px;top:165px;width:90px;height:23px;box-sizing:border-box;border:2px dashed #217346;"></div>
</div>
<div style="left:0;top:0;width:297px;height:21px;background:#efefef"></div>
<div style="left:2px;top:5px;width:45px;height:11px;background:#fff;box-shadow:0 0 0 0.5px #d8d8d8"></div>
<div class="t" style="left:4px;top:11px;font-size:6.5px;color:#888">I5</div>
<svg style="left:39px;top:9px" width="5" height="3"><polygon points="0,0 5,0 2.5,3" fill="#777"/></svg>
<div style="left:54px;top:8px;width:1px;height:1px;background:#aaa"></div><div style="left:54px;top:11px;width:1px;height:1px;background:#aaa"></div>
<div style="left:61px;top:5px;width:49px;height:11px;background:#fff"></div>
<svg style="left:72px;top:8px" width="6" height="6"><path d="M0.5,0.5 L5.5,5.5 M5.5,0.5 L0.5,5.5" stroke="#707070" stroke-width="0.9" fill="none"/></svg>
<svg style="left:86px;top:8px" width="7" height="6"><path d="M0.5,3 L2.5,5.2 L6.5,0.5" stroke="#707070" stroke-width="0.9" fill="none"/></svg>
<div class="t" style="left:100px;top:11px;font-size:7px;color:#777;font-style:italic">f</div>
<div style="left:113px;top:5px;width:184px;height:11px;background:#fff"></div>
<div class="t" style="left:117px;top:11px;font-size:6.5px;color:#777">=(1+F$4)*Fleet!$G</div>
</div>
<div class="t" style="left:1060px;top:904px;width:265px;font-size:10.75px;text-align:right;color:#6aa84f;font-weight:bold;">Figure 2-106 Mixed references in the new formula</div>
</body></html>
